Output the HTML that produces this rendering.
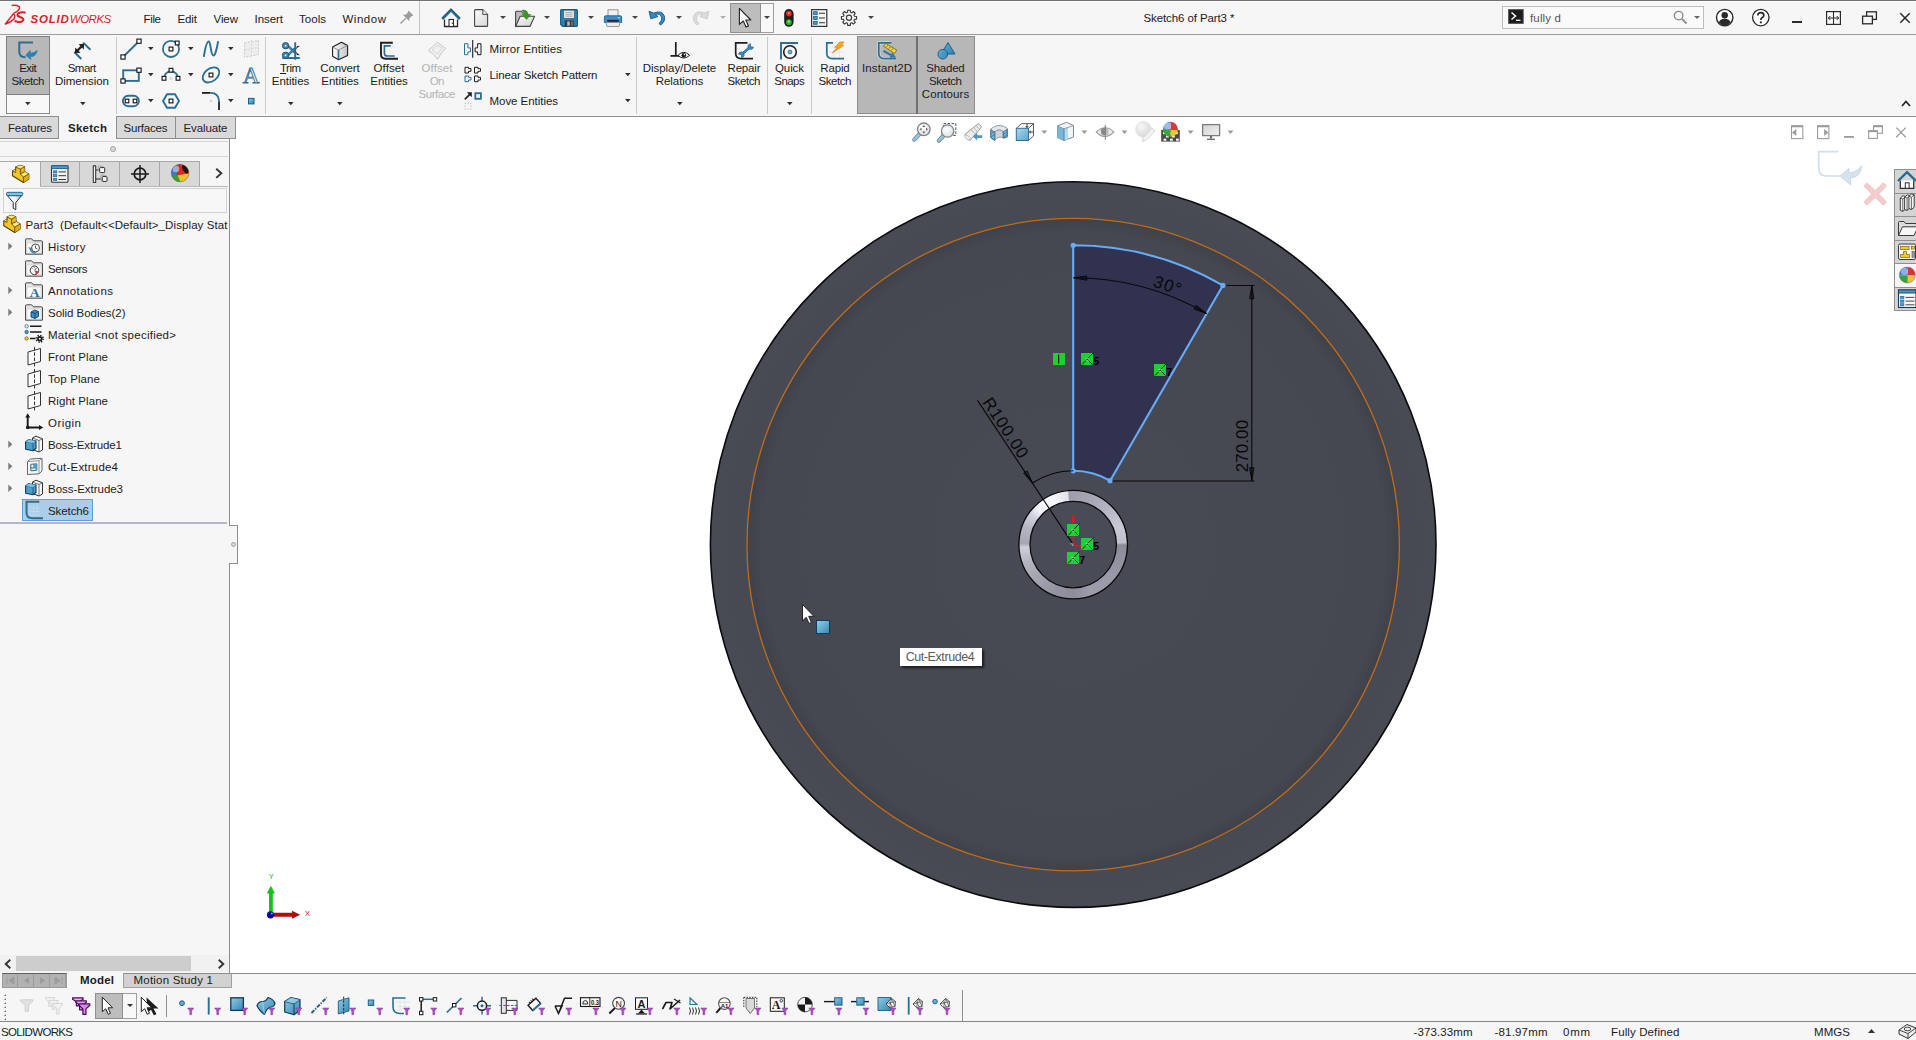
<!DOCTYPE html>
<html><head><meta charset="utf-8"><title>SOLIDWORKS</title>
<style>
html,body{margin:0;padding:0}
body{width:1916px;height:1040px;position:relative;overflow:hidden;background:#fff;font-family:"Liberation Sans",sans-serif;font-size:12px;color:#1b1b1b}
body>div,body>svg{position:absolute}
svg{overflow:visible}
</style></head><body>
<div style="left:0px;top:0px;width:1916px;height:117px;background:#f6f6f6;"></div>
<div style="left:0px;top:0px;width:1916px;height:1px;background:#707070;"></div>
<div style="left:0px;top:1px;width:1916px;height:1px;background:#fdfdfd;"></div>
<div style="left:0px;top:34px;width:1916px;height:1px;background:#9b9b9b;"></div>
<div style="left:0px;top:116px;width:1916px;height:1px;background:#8e8e8e;"></div>
<div style="left:0px;top:116px;width:230px;height:858px;background:#f6f6f6;"></div>
<div style="left:229px;top:139px;width:1px;height:835px;background:#8f8f8f;"></div>
<div style="left:0px;top:973px;width:1916px;height:67px;background:#f6f6f6;"></div>
<div style="left:123px;top:973px;width:1793px;height:1px;background:#8c8c8c;"></div>
<div style="left:0px;top:1021px;width:1916px;height:1px;background:#858585;"></div>
<div style="left:0px;top:116px;width:59px;height:23px;background:#d9d9d9;border:1px solid #8e8e8e;border-left:none;box-sizing:border-box;"></div>
<div style="left:116px;top:116px;width:60px;height:23px;background:#d9d9d9;border:1px solid #8e8e8e;box-sizing:border-box;"></div>
<div style="left:175px;top:116px;width:61px;height:23px;background:#d9d9d9;border:1px solid #8e8e8e;box-sizing:border-box;"></div>
<div style="left:59px;top:117px;width:57px;height:22px;background:#f6f6f6;"></div>
<div style="top:122px;line-height:12px;font-size:11.5px;color:#222;white-space:nowrap;letter-spacing:-0.200px;left:-170px;width:400px;text-align:center;text-indent:-0.200px;"><span id="t1">Features</span></div>
<div style="top:122px;line-height:12px;font-size:11.5px;color:#222;white-space:nowrap;font-weight:700;letter-spacing:0.255px;left:-112.5px;width:400px;text-align:center;text-indent:0.255px;"><span id="t2">Sketch</span></div>
<div style="top:122px;line-height:12px;font-size:11.5px;color:#222;white-space:nowrap;letter-spacing:-0.200px;left:-54.5px;width:400px;text-align:center;text-indent:-0.200px;"><span id="t3">Surfaces</span></div>
<div style="top:122px;line-height:12px;font-size:11.5px;color:#222;white-space:nowrap;letter-spacing:-0.109px;left:5.5px;width:400px;text-align:center;text-indent:-0.109px;"><span id="t4">Evaluate</span></div>
<div style="left:0px;top:141px;width:228px;height:1px;background:#d5d5d5;"></div>
<div style="left:0px;top:156px;width:228px;height:1px;background:#d5d5d5;"></div>
<div style="left:110px;top:146px;width:6px;height:6px;background:#d9d9d9;border-radius:50%;border:1px solid #a5a5a5;box-sizing:border-box;"></div>
<div style="left:40px;top:161px;width:40px;height:26px;background:#d8d8d8;border:1px solid #a8a8a8;box-sizing:border-box;"></div>
<div style="left:80px;top:161px;width:40px;height:26px;background:#d8d8d8;border:1px solid #a8a8a8;box-sizing:border-box;border-left:none;"></div>
<div style="left:120px;top:161px;width:40px;height:26px;background:#d8d8d8;border:1px solid #a8a8a8;box-sizing:border-box;border-left:none;"></div>
<div style="left:160px;top:161px;width:40px;height:26px;background:#d8d8d8;border:1px solid #a8a8a8;box-sizing:border-box;border-left:none;"></div>
<div style="left:0px;top:186px;width:228px;height:1px;background:#b8b8b8;"></div>
<div style="left:0px;top:161px;width:40px;height:26px;background:#f6f6f6;"></div>
<div style="left:0px;top:161px;width:41px;height:1px;background:#a8a8a8;"></div>
<div style="left:3px;top:188px;width:224px;height:25px;background:#f7f7f7;border:1px solid #d2d2d2;box-sizing:border-box;"></div>
<div style="left:229px;top:525px;width:9px;height:39px;background:#f6f6f6;border:1px solid #8f8f8f;border-left:none;box-sizing:border-box;"></div>
<div style="left:230.5px;top:541.5px;width:5px;height:5px;background:#d9d9d9;border-radius:50%;border:1px solid #a5a5a5;box-sizing:border-box;"></div>
<div style="left:0px;top:522px;width:227px;height:2px;background:#b6b6ca;"></div>
<svg style="left:0px;top:0px;" width="30" height="30" viewBox="0 0 30 30"><g fill="none" stroke="#d9232b" stroke-linecap="round" stroke-linejoin="round">
<path d="M12.300 5.400Q16.500 5 19.300 6.700Q20.300 9 16.800 11.600L14.600 12.700" stroke-width="1.500"/>
<path d="M5.400 24L13.500 13.600Q15.800 16.200 13.800 19.300Q11 22.300 5.400 24Z" stroke-width="1.500"/>
<path d="M24.800 12.500Q21 11.700 18.300 13.300Q16.200 15.300 19.300 16.700L22.300 18Q24.700 19.800 21.800 21.500Q19 22.600 15.300 21.300" stroke-width="2.100"/>
</g></svg>
<div style="top:12.5px;line-height:12px;font-size:11.5px;color:#d9232b;white-space:nowrap;font-weight:700;font-style:italic;letter-spacing:0.800px;left:30.5px;"><span id="t5">SOLID</span></div>
<div style="top:12.5px;line-height:12px;font-size:11.5px;color:#d9232b;white-space:nowrap;font-style:italic;letter-spacing:-0.490px;left:69.8px;"><span id="t6">WORKS</span></div>
<div style="top:13px;line-height:12px;font-size:11.5px;color:#1b1b1b;white-space:nowrap;letter-spacing:-0.344px;left:143.5px;"><span id="t7">File</span></div>
<div style="top:13px;line-height:12px;font-size:11.5px;color:#1b1b1b;white-space:nowrap;letter-spacing:-0.109px;left:177.5px;"><span id="t8">Edit</span></div>
<div style="top:13px;line-height:12px;font-size:11.5px;color:#1b1b1b;white-space:nowrap;letter-spacing:-0.077px;left:213.5px;"><span id="t9">View</span></div>
<div style="top:13px;line-height:12px;font-size:11.5px;color:#1b1b1b;white-space:nowrap;letter-spacing:-0.052px;left:254.5px;"><span id="t10">Insert</span></div>
<div style="top:13px;line-height:12px;font-size:11.5px;color:#1b1b1b;white-space:nowrap;letter-spacing:0.037px;left:299px;"><span id="t11">Tools</span></div>
<div style="top:13px;line-height:12px;font-size:11.5px;color:#1b1b1b;white-space:nowrap;letter-spacing:0.518px;left:342.5px;"><span id="t12">Window</span></div>
<div style="left:419px;top:1px;width:1px;height:33px;background:#c4c4c4;"></div>
<div style="top:12px;line-height:12px;font-size:11.5px;color:#1b1b1b;white-space:nowrap;letter-spacing:-0.100px;left:989px;width:400px;text-align:center;text-indent:-0.100px;"><span id="t13">Sketch6 of Part3 *</span></div>
<div style="left:1502px;top:6px;width:202px;height:23px;background:#fafafa;border:1px solid #bdbdbd;box-sizing:border-box;"></div>
<div style="top:11.5px;line-height:12px;font-size:11.5px;color:#555;white-space:nowrap;letter-spacing:0.159px;left:1530px;"><span id="t14">fully d</span></div>
<div style="left:730px;top:3px;width:31px;height:30px;background:#bdbdbd;border:1px solid #8f8f8f;box-sizing:border-box;"></div>
<div style="left:761px;top:3px;width:13px;height:30px;background:#f8f8f8;border:1px solid #9e9e9e;border-left:none;box-sizing:border-box;"></div>
<svg style="left:499.5px;top:16.0px;" width="6" height="3" viewBox="0 0 6 3"><path d="M0 0H6L3.0 3Z" fill="#444"/></svg>
<svg style="left:543.5px;top:16.0px;" width="6" height="3" viewBox="0 0 6 3"><path d="M0 0H6L3.0 3Z" fill="#444"/></svg>
<svg style="left:587.5px;top:16.0px;" width="6" height="3" viewBox="0 0 6 3"><path d="M0 0H6L3.0 3Z" fill="#444"/></svg>
<svg style="left:631.5px;top:16.0px;" width="6" height="3" viewBox="0 0 6 3"><path d="M0 0H6L3.0 3Z" fill="#444"/></svg>
<svg style="left:675.5px;top:16.0px;" width="6" height="3" viewBox="0 0 6 3"><path d="M0 0H6L3.0 3Z" fill="#444"/></svg>
<svg style="left:719.5px;top:16.0px;" width="6" height="3" viewBox="0 0 6 3"><path d="M0 0H6L3.0 3Z" fill="#b0b0b0"/></svg>
<svg style="left:763.5px;top:16.0px;" width="6" height="3" viewBox="0 0 6 3"><path d="M0 0H6L3.0 3Z" fill="#444"/></svg>
<svg style="left:867.5px;top:16.0px;" width="6" height="3" viewBox="0 0 6 3"><path d="M0 0H6L3.0 3Z" fill="#444"/></svg>
<svg style="left:1694.0px;top:16.0px;" width="6" height="3" viewBox="0 0 6 3"><path d="M0 0H6L3.0 3Z" fill="#666"/></svg>
<div style="left:6px;top:36px;width:44px;height:78px;background:#f8f8f8;border:1px solid #8a8a8a;box-sizing:border-box;"></div>
<div style="left:6px;top:36px;width:44px;height:59px;background:#b8b8b8;border:1px solid #7e7e7e;box-sizing:border-box;"></div>
<div style="top:61.5px;line-height:12px;font-size:11.5px;color:#1b1b1b;white-space:nowrap;letter-spacing:-0.559px;left:-172px;width:400px;text-align:center;text-indent:-0.559px;"><span id="t15">Exit</span></div>
<div style="top:74.5px;line-height:12px;font-size:11.5px;color:#1b1b1b;white-space:nowrap;letter-spacing:-0.432px;left:-172px;width:400px;text-align:center;text-indent:-0.432px;"><span id="t16">Sketch</span></div>
<svg style="left:24.7px;top:101.9px;" width="5.6" height="3.2" viewBox="0 0 5.6 3.2"><path d="M0 0H5.6L2.8 3.2Z" fill="#2e2e2e"/></svg>
<div style="top:61.5px;line-height:12px;font-size:11.5px;color:#1b1b1b;white-space:nowrap;letter-spacing:-0.546px;left:-118px;width:400px;text-align:center;text-indent:-0.546px;"><span id="t17">Smart</span></div>
<div style="top:74.5px;line-height:12px;font-size:11.5px;color:#1b1b1b;white-space:nowrap;letter-spacing:-0.041px;left:-118px;width:400px;text-align:center;text-indent:-0.041px;"><span id="t18">Dimension</span></div>
<svg style="left:79.7px;top:101.9px;" width="5.6" height="3.2" viewBox="0 0 5.6 3.2"><path d="M0 0H5.6L2.8 3.2Z" fill="#2e2e2e"/></svg>
<div style="left:116px;top:37px;width:1px;height:77px;background:#c9c9c9;"></div>
<div style="left:265px;top:37px;width:1px;height:77px;background:#c9c9c9;"></div>
<div style="left:636px;top:37px;width:1px;height:77px;background:#c9c9c9;"></div>
<div style="left:767px;top:37px;width:1px;height:77px;background:#c9c9c9;"></div>
<div style="left:811px;top:37px;width:1px;height:77px;background:#c9c9c9;"></div>
<svg style="left:147.7px;top:46.9px;" width="5.6" height="3.2" viewBox="0 0 5.6 3.2"><path d="M0 0H5.6L2.8 3.2Z" fill="#2e2e2e"/></svg>
<svg style="left:147.7px;top:72.9px;" width="5.6" height="3.2" viewBox="0 0 5.6 3.2"><path d="M0 0H5.6L2.8 3.2Z" fill="#2e2e2e"/></svg>
<svg style="left:147.7px;top:98.9px;" width="5.6" height="3.2" viewBox="0 0 5.6 3.2"><path d="M0 0H5.6L2.8 3.2Z" fill="#2e2e2e"/></svg>
<svg style="left:187.7px;top:46.9px;" width="5.6" height="3.2" viewBox="0 0 5.6 3.2"><path d="M0 0H5.6L2.8 3.2Z" fill="#2e2e2e"/></svg>
<svg style="left:187.7px;top:72.9px;" width="5.6" height="3.2" viewBox="0 0 5.6 3.2"><path d="M0 0H5.6L2.8 3.2Z" fill="#2e2e2e"/></svg>
<svg style="left:227.7px;top:46.9px;" width="5.6" height="3.2" viewBox="0 0 5.6 3.2"><path d="M0 0H5.6L2.8 3.2Z" fill="#2e2e2e"/></svg>
<svg style="left:227.7px;top:72.9px;" width="5.6" height="3.2" viewBox="0 0 5.6 3.2"><path d="M0 0H5.6L2.8 3.2Z" fill="#2e2e2e"/></svg>
<svg style="left:227.7px;top:98.9px;" width="5.6" height="3.2" viewBox="0 0 5.6 3.2"><path d="M0 0H5.6L2.8 3.2Z" fill="#2e2e2e"/></svg>
<div style="top:61.5px;line-height:12px;font-size:11.5px;color:#1b1b1b;white-space:nowrap;letter-spacing:-0.527px;left:90.5px;width:400px;text-align:center;text-indent:-0.527px;"><span id="t19"><u>T</u>rim</span></div>
<div style="top:74.5px;line-height:12px;font-size:11.5px;color:#1b1b1b;white-space:nowrap;letter-spacing:-0.031px;left:90.5px;width:400px;text-align:center;text-indent:-0.031px;"><span id="t20">Entities</span></div>
<svg style="left:287.7px;top:101.9px;" width="5.6" height="3.2" viewBox="0 0 5.6 3.2"><path d="M0 0H5.6L2.8 3.2Z" fill="#2e2e2e"/></svg>
<div style="top:61.5px;line-height:12px;font-size:11.5px;color:#1b1b1b;white-space:nowrap;letter-spacing:-0.129px;left:140px;width:400px;text-align:center;text-indent:-0.129px;"><span id="t21">Convert</span></div>
<div style="top:74.5px;line-height:12px;font-size:11.5px;color:#1b1b1b;white-space:nowrap;letter-spacing:-0.031px;left:140px;width:400px;text-align:center;text-indent:-0.031px;"><span id="t22">Entities</span></div>
<svg style="left:337.2px;top:101.9px;" width="5.6" height="3.2" viewBox="0 0 5.6 3.2"><path d="M0 0H5.6L2.8 3.2Z" fill="#2e2e2e"/></svg>
<div style="top:61.5px;line-height:12px;font-size:11.5px;color:#1b1b1b;white-space:nowrap;letter-spacing:0.104px;left:189px;width:400px;text-align:center;text-indent:0.104px;"><span id="t23">Offset</span></div>
<div style="top:74.5px;line-height:12px;font-size:11.5px;color:#1b1b1b;white-space:nowrap;letter-spacing:-0.031px;left:189px;width:400px;text-align:center;text-indent:-0.031px;"><span id="t24">Entities</span></div>
<div style="top:61.5px;line-height:12px;font-size:11.5px;color:#b4b4b4;white-space:nowrap;letter-spacing:0.104px;left:237px;width:400px;text-align:center;text-indent:0.104px;"><span id="t25">Offset</span></div>
<div style="top:74.5px;line-height:12px;font-size:11.5px;color:#b4b4b4;white-space:nowrap;letter-spacing:-0.750px;left:237px;width:400px;text-align:center;text-indent:-0.750px;"><span id="t26">On</span></div>
<div style="top:87.5px;line-height:12px;font-size:11.5px;color:#b4b4b4;white-space:nowrap;letter-spacing:-0.440px;left:237px;width:400px;text-align:center;text-indent:-0.440px;"><span id="t27">Surface</span></div>
<div style="top:43px;line-height:12px;font-size:11.5px;color:#1b1b1b;white-space:nowrap;letter-spacing:0.112px;left:489.5px;"><span id="t28">Mirror Entities</span></div>
<div style="top:69px;line-height:12px;font-size:11.5px;color:#1b1b1b;white-space:nowrap;letter-spacing:-0.130px;left:489.5px;"><span id="t29">Linear Sketch Pattern</span></div>
<div style="top:95px;line-height:12px;font-size:11.5px;color:#1b1b1b;white-space:nowrap;letter-spacing:-0.045px;left:489.5px;"><span id="t30">Move Entities</span></div>
<svg style="left:624.7px;top:72.9px;" width="5.6" height="3.2" viewBox="0 0 5.6 3.2"><path d="M0 0H5.6L2.8 3.2Z" fill="#2e2e2e"/></svg>
<svg style="left:624.7px;top:98.9px;" width="5.6" height="3.2" viewBox="0 0 5.6 3.2"><path d="M0 0H5.6L2.8 3.2Z" fill="#2e2e2e"/></svg>
<div style="top:61.5px;line-height:12px;font-size:11.5px;color:#1b1b1b;white-space:nowrap;letter-spacing:-0.050px;left:479.5px;width:400px;text-align:center;text-indent:-0.050px;"><span id="t31">Display/Delete</span></div>
<div style="top:74.5px;line-height:12px;font-size:11.5px;color:#1b1b1b;white-space:nowrap;letter-spacing:-0.057px;left:479.5px;width:400px;text-align:center;text-indent:-0.057px;"><span id="t32">Relations</span></div>
<svg style="left:676.7px;top:101.9px;" width="5.6" height="3.2" viewBox="0 0 5.6 3.2"><path d="M0 0H5.6L2.8 3.2Z" fill="#2e2e2e"/></svg>
<div style="top:61.5px;line-height:12px;font-size:11.5px;color:#1b1b1b;white-space:nowrap;letter-spacing:-0.177px;left:544px;width:400px;text-align:center;text-indent:-0.177px;"><span id="t33">Repair</span></div>
<div style="top:74.5px;line-height:12px;font-size:11.5px;color:#1b1b1b;white-space:nowrap;letter-spacing:-0.432px;left:544px;width:400px;text-align:center;text-indent:-0.432px;"><span id="t34">Sketch</span></div>
<div style="top:61.5px;line-height:12px;font-size:11.5px;color:#1b1b1b;white-space:nowrap;letter-spacing:-0.102px;left:589.5px;width:400px;text-align:center;text-indent:-0.102px;"><span id="t35">Quick</span></div>
<div style="top:74.5px;line-height:12px;font-size:11.5px;color:#1b1b1b;white-space:nowrap;letter-spacing:-0.530px;left:589.5px;width:400px;text-align:center;text-indent:-0.530px;"><span id="t36">Snaps</span></div>
<svg style="left:786.7px;top:101.9px;" width="5.6" height="3.2" viewBox="0 0 5.6 3.2"><path d="M0 0H5.6L2.8 3.2Z" fill="#2e2e2e"/></svg>
<div style="top:61.5px;line-height:12px;font-size:11.5px;color:#1b1b1b;white-space:nowrap;letter-spacing:-0.140px;left:635px;width:400px;text-align:center;text-indent:-0.140px;"><span id="t37">Rapid</span></div>
<div style="top:74.5px;line-height:12px;font-size:11.5px;color:#1b1b1b;white-space:nowrap;letter-spacing:-0.432px;left:635px;width:400px;text-align:center;text-indent:-0.432px;"><span id="t38">Sketch</span></div>
<div style="left:857px;top:36px;width:60px;height:78px;background:#b7b7b7;border:1px solid #8d8d8d;box-sizing:border-box;"></div>
<div style="left:916px;top:36px;width:59px;height:78px;background:#b7b7b7;border:1px solid #8d8d8d;box-sizing:border-box;"></div>
<div style="left:916px;top:36px;width:2px;height:78px;background:#707070;"></div>
<div style="top:61.5px;line-height:12px;font-size:11.5px;color:#1b1b1b;white-space:nowrap;letter-spacing:0.096px;left:687px;width:400px;text-align:center;text-indent:0.096px;"><span id="t39">Instant2D</span></div>
<div style="top:61.5px;line-height:12px;font-size:11.5px;color:#1b1b1b;white-space:nowrap;letter-spacing:-0.232px;left:745.5px;width:400px;text-align:center;text-indent:-0.232px;"><span id="t40">Shaded</span></div>
<div style="top:74.5px;line-height:12px;font-size:11.5px;color:#1b1b1b;white-space:nowrap;letter-spacing:-0.432px;left:745.5px;width:400px;text-align:center;text-indent:-0.432px;"><span id="t41">Sketch</span></div>
<div style="top:87.5px;line-height:12px;font-size:11.5px;color:#1b1b1b;white-space:nowrap;letter-spacing:0.118px;left:745.5px;width:400px;text-align:center;text-indent:0.118px;"><span id="t42">Contours</span></div>
<svg style="left:1900.5px;top:99.5px;" width="10" height="7" viewBox="0 0 10 7"><path d="M1 6L5 1.500L9 6" fill="none" stroke="#222" stroke-width="1.700"/></svg>
<div style="top:219px;line-height:12px;font-size:11.5px;color:#1b1b1b;white-space:nowrap;letter-spacing:0.095px;left:25.5px;"><span id="t43">Part3&nbsp; (Default&lt;&lt;Default&gt;_Display Stat</span></div>
<div style="top:241.0px;line-height:12px;font-size:11.5px;color:#1b1b1b;white-space:nowrap;letter-spacing:0.284px;left:48px;"><span id="t44">History</span></div>
<svg style="left:7.5px;top:242.0px;" width="5" height="9" viewBox="0 0 5 9"><path d="M0.300 0.500L4.300 4.300L0.300 8.100Z" fill="#7a7a7a"/></svg>
<div style="top:263.0px;line-height:12px;font-size:11.5px;color:#1b1b1b;white-space:nowrap;letter-spacing:-0.449px;left:48px;"><span id="t45">Sensors</span></div>
<div style="top:285.0px;line-height:12px;font-size:11.5px;color:#1b1b1b;white-space:nowrap;letter-spacing:0.425px;left:48px;"><span id="t46">Annotations</span></div>
<svg style="left:7.5px;top:286.0px;" width="5" height="9" viewBox="0 0 5 9"><path d="M0.300 0.500L4.300 4.300L0.300 8.100Z" fill="#7a7a7a"/></svg>
<div style="top:307.0px;line-height:12px;font-size:11.5px;color:#1b1b1b;white-space:nowrap;letter-spacing:-0.035px;left:48px;"><span id="t47">Solid Bodies(2)</span></div>
<svg style="left:7.5px;top:308.0px;" width="5" height="9" viewBox="0 0 5 9"><path d="M0.300 0.500L4.300 4.300L0.300 8.100Z" fill="#7a7a7a"/></svg>
<div style="top:329.0px;line-height:12px;font-size:11.5px;color:#1b1b1b;white-space:nowrap;letter-spacing:0.256px;left:48px;"><span id="t48">Material &lt;not specified&gt;</span></div>
<div style="top:351.0px;line-height:12px;font-size:11.5px;color:#1b1b1b;white-space:nowrap;letter-spacing:0.055px;left:48px;"><span id="t49">Front Plane</span></div>
<div style="top:373.0px;line-height:12px;font-size:11.5px;color:#1b1b1b;white-space:nowrap;letter-spacing:0.105px;left:48px;"><span id="t50">Top Plane</span></div>
<div style="top:395.0px;line-height:12px;font-size:11.5px;color:#1b1b1b;white-space:nowrap;letter-spacing:0.053px;left:48px;"><span id="t51">Right Plane</span></div>
<div style="top:417.0px;line-height:12px;font-size:11.5px;color:#1b1b1b;white-space:nowrap;letter-spacing:0.464px;left:48px;"><span id="t52">Origin</span></div>
<div style="top:439.0px;line-height:12px;font-size:11.5px;color:#1b1b1b;white-space:nowrap;letter-spacing:-0.120px;left:48px;"><span id="t53">Boss-Extrude1</span></div>
<svg style="left:7.5px;top:440.0px;" width="5" height="9" viewBox="0 0 5 9"><path d="M0.300 0.500L4.300 4.300L0.300 8.100Z" fill="#7a7a7a"/></svg>
<div style="top:461.0px;line-height:12px;font-size:11.5px;color:#1b1b1b;white-space:nowrap;letter-spacing:0.203px;left:48px;"><span id="t54">Cut-Extrude4</span></div>
<svg style="left:7.5px;top:462.0px;" width="5" height="9" viewBox="0 0 5 9"><path d="M0.300 0.500L4.300 4.300L0.300 8.100Z" fill="#7a7a7a"/></svg>
<div style="top:483.0px;line-height:12px;font-size:11.5px;color:#1b1b1b;white-space:nowrap;letter-spacing:-0.036px;left:48px;"><span id="t55">Boss-Extrude3</span></div>
<svg style="left:7.5px;top:484.0px;" width="5" height="9" viewBox="0 0 5 9"><path d="M0.300 0.500L4.300 4.300L0.300 8.100Z" fill="#7a7a7a"/></svg>
<div style="left:22px;top:499.0px;width:71px;height:22px;background:#aacdea;border:1px solid #5f9fd8;box-sizing:border-box;"></div>
<div style="top:505.0px;line-height:12px;font-size:11.5px;color:#1b1b1b;white-space:nowrap;letter-spacing:-0.094px;left:48px;"><span id="t56">Sketch6</span></div>
<div style="left:0px;top:955px;width:229px;height:17px;background:#f1f1f1;"></div>
<div style="left:16px;top:956px;width:175px;height:15px;background:#cdcdcd;"></div>
<svg style="left:4px;top:958.5px;" width="8" height="10" viewBox="0 0 8 10"><path d="M6.300 0.800L1.700 5L6.300 9.200" fill="none" stroke="#333" stroke-width="1.900"/></svg>
<svg style="left:217px;top:958.5px;" width="8" height="10" viewBox="0 0 8 10"><path d="M1.700 0.800L6.300 5L1.700 9.200" fill="none" stroke="#333" stroke-width="1.900"/></svg>
<svg style="left:214px;top:167px;" width="10" height="14" viewBox="0 0 10 14"><path d="M2.200 1.700L7.300 6.300L2.200 10.900" fill="none" stroke="#333" stroke-width="1.900"/></svg>
<div style="left:2px;top:973px;width:65px;height:15px;background:#b2b2b2;border:1px solid #9a9a9a;border-top:1px solid #5e5e5e;box-sizing:border-box;"></div>
<div style="left:3px;top:974px;width:15px;height:13px;background:#b2b2b2;border-right:1px solid #9c9c9c;box-sizing:border-box;"></div>
<div style="left:19px;top:974px;width:15px;height:13px;background:#b2b2b2;border-right:1px solid #9c9c9c;box-sizing:border-box;"></div>
<div style="left:35px;top:974px;width:15px;height:13px;background:#b2b2b2;border-right:1px solid #9c9c9c;box-sizing:border-box;"></div>
<div style="left:51px;top:974px;width:15px;height:13px;background:#b2b2b2;border-right:1px solid #9c9c9c;box-sizing:border-box;"></div>
<svg style="left:3px;top:974px;" width="15" height="13" viewBox="0 0 15 13"><path d="M4 3v7M11 3L6 6.500L11 10Z" fill="#9c9c9c" stroke="#9c9c9c" stroke-width="1"/></svg>
<svg style="left:19px;top:974px;" width="15" height="13" viewBox="0 0 15 13"><path d="M10 3L5 6.500L10 10Z" fill="#9c9c9c"/></svg>
<svg style="left:35px;top:974px;" width="15" height="13" viewBox="0 0 15 13"><path d="M5 3L10 6.500L5 10Z" fill="#9c9c9c"/></svg>
<svg style="left:51px;top:974px;" width="15" height="13" viewBox="0 0 15 13"><path d="M11 3v7M4 3L9 6.500L4 10Z" fill="#9c9c9c" stroke="#9c9c9c" stroke-width="1"/></svg>
<div style="top:973.5px;line-height:12px;font-size:11.5px;color:#1b1b1b;white-space:nowrap;font-weight:700;letter-spacing:0.193px;left:-103px;width:400px;text-align:center;text-indent:0.193px;"><span id="t57">Model</span></div>
<div style="left:123px;top:973px;width:109px;height:15px;background:#d2d2d2;border:1px solid #a0a0a0;border-top:1px solid #8c8c8c;box-sizing:border-box;"></div>
<div style="top:973.5px;line-height:12px;font-size:11.5px;color:#1b1b1b;white-space:nowrap;letter-spacing:0.214px;left:133.5px;"><span id="t58">Motion Study 1</span></div>
<div style="left:4px;top:994px;width:1px;height:1px;background:#ffffff;"></div>
<div style="left:5px;top:995px;width:1px;height:1px;background:#6a6a6a;"></div>
<div style="left:4px;top:995px;width:1px;height:1px;background:#b5b5b5;"></div>
<div style="left:5px;top:994px;width:1px;height:1px;background:#b5b5b5;"></div>
<div style="left:4px;top:998px;width:1px;height:1px;background:#ffffff;"></div>
<div style="left:5px;top:999px;width:1px;height:1px;background:#6a6a6a;"></div>
<div style="left:4px;top:999px;width:1px;height:1px;background:#b5b5b5;"></div>
<div style="left:5px;top:998px;width:1px;height:1px;background:#b5b5b5;"></div>
<div style="left:4px;top:1002px;width:1px;height:1px;background:#ffffff;"></div>
<div style="left:5px;top:1003px;width:1px;height:1px;background:#6a6a6a;"></div>
<div style="left:4px;top:1003px;width:1px;height:1px;background:#b5b5b5;"></div>
<div style="left:5px;top:1002px;width:1px;height:1px;background:#b5b5b5;"></div>
<div style="left:4px;top:1006px;width:1px;height:1px;background:#ffffff;"></div>
<div style="left:5px;top:1007px;width:1px;height:1px;background:#6a6a6a;"></div>
<div style="left:4px;top:1007px;width:1px;height:1px;background:#b5b5b5;"></div>
<div style="left:5px;top:1006px;width:1px;height:1px;background:#b5b5b5;"></div>
<div style="left:4px;top:1010px;width:1px;height:1px;background:#ffffff;"></div>
<div style="left:5px;top:1011px;width:1px;height:1px;background:#6a6a6a;"></div>
<div style="left:4px;top:1011px;width:1px;height:1px;background:#b5b5b5;"></div>
<div style="left:5px;top:1010px;width:1px;height:1px;background:#b5b5b5;"></div>
<div style="left:4px;top:1014px;width:1px;height:1px;background:#ffffff;"></div>
<div style="left:5px;top:1015px;width:1px;height:1px;background:#6a6a6a;"></div>
<div style="left:4px;top:1015px;width:1px;height:1px;background:#b5b5b5;"></div>
<div style="left:5px;top:1014px;width:1px;height:1px;background:#b5b5b5;"></div>
<div style="left:4px;top:1018px;width:1px;height:1px;background:#ffffff;"></div>
<div style="left:5px;top:1019px;width:1px;height:1px;background:#6a6a6a;"></div>
<div style="left:4px;top:1019px;width:1px;height:1px;background:#b5b5b5;"></div>
<div style="left:5px;top:1018px;width:1px;height:1px;background:#b5b5b5;"></div>
<div style="left:95px;top:993px;width:28px;height:26px;background:#bdbdbd;border:1px solid #8f8f8f;box-sizing:border-box;"></div>
<div style="left:123px;top:993px;width:14px;height:26px;background:#f8f8f8;border:1px solid #9e9e9e;border-left:none;box-sizing:border-box;"></div>
<svg style="left:126.5px;top:1004px;" width="6" height="3" viewBox="0 0 6 3"><path d="M0 0H6L3 3Z" fill="#333"/></svg>
<div style="left:166px;top:995px;width:1px;height:22px;background:#8f8f8f;"></div>
<div style="left:962px;top:990px;width:1px;height:31px;background:#8f8f8f;"></div>
<div style="top:1025.5px;line-height:12px;font-size:11.5px;color:#1b1b1b;white-space:nowrap;letter-spacing:-0.663px;left:1px;"><span id="t59">SOLIDWORKS</span></div>
<div style="top:1025.5px;line-height:12px;font-size:11.5px;color:#1b1b1b;white-space:nowrap;letter-spacing:0.104px;left:1413.5px;"><span id="t60">-373.33mm</span></div>
<div style="top:1025.5px;line-height:12px;font-size:11.5px;color:#1b1b1b;white-space:nowrap;letter-spacing:0.174px;left:1494.5px;"><span id="t61">-81.97mm</span></div>
<div style="top:1025.5px;line-height:12px;font-size:11.5px;color:#1b1b1b;white-space:nowrap;letter-spacing:0.800px;left:1563px;"><span id="t62">0mm</span></div>
<div style="top:1025.5px;line-height:12px;font-size:11.5px;color:#1b1b1b;white-space:nowrap;letter-spacing:0.115px;left:1611px;"><span id="t63">Fully Defined</span></div>
<div style="top:1025.5px;line-height:12px;font-size:11.5px;color:#1b1b1b;white-space:nowrap;letter-spacing:0.074px;left:1814px;"><span id="t64">MMGS</span></div>
<svg style="left:1868px;top:1029px;" width="7" height="4" viewBox="0 0 7 4"><path d="M0 4H7L3.500 0Z" fill="#333"/></svg>
<svg style="left:230px;top:117px;font-family:'Liberation Sans',sans-serif" width="1686" height="854" viewBox="230 117 1686 854"><defs>
<radialGradient id="gd" cx="1073.2" cy="544.6" r="363" gradientUnits="userSpaceOnUse">
<stop offset="0" stop-color="#484a55"/><stop offset="0.5" stop-color="#464852"/><stop offset="0.860" stop-color="#454751"/>
<stop offset="0.885" stop-color="#41434d"/><stop offset="0.897" stop-color="#3f414b"/><stop offset="0.899" stop-color="#474953"/><stop offset="1" stop-color="#484a54"/>
</radialGradient>
<linearGradient id="gr" x1="0" y1="0" x2="1" y2="1">
<stop offset="0" stop-color="#ffffff"/><stop offset="0.280" stop-color="#e9e9f2"/><stop offset="0.420" stop-color="#9c9daa"/><stop offset="0.600" stop-color="#b6b7c4"/><stop offset="1" stop-color="#7d7e8a"/>
</linearGradient>
</defs>
<circle cx="1073.2" cy="544.6" r="362.800" fill="url(#gd)" stroke="#0b0b0d" stroke-width="1.600"/>
<circle cx="1073.2" cy="544.6" r="326.200" fill="none" stroke="#c06c1a" stroke-width="1.300"/></svg>
<div style="left:1018.9px;top:490.3px;width:108.6px;height:108.6px;border-radius:50%;background:conic-gradient(from -45deg,#f2f2fa 0deg,#f7f7fd 20deg,#e2e2ec 39deg,#9d9eab 40.5deg,#a5a6b4 65deg,#b6b7c4 90deg,#c8c9d5 115deg,#c0c1cd 133deg,#8a8b97 135.5deg,#8f909d 145deg,#9a9ba8 180deg,#9c9daa 205deg,#8d8e9b 225deg,#9293a0 245deg,#a2a3af 270deg,#b4b5c1 295deg,#cfcfd9 312deg,#a6a7b4 316deg,#b5b6c2 335deg,#cfd0da 350deg,#f2f2fa 360deg);"></div>
<svg style="left:230px;top:117px;font-family:'Liberation Sans',sans-serif" width="1686" height="854" viewBox="230 117 1686 854"><circle cx="1073.2" cy="544.6" r="54.300" fill="none" stroke="#0b0b0d" stroke-width="1.300"/>
<circle cx="1073.2" cy="544.6" r="43.200" fill="#494b56" stroke="#0b0b0d" stroke-width="1.300"/>
<path d="M1073.20 245.30A299.3 299.3 0 0 1 1222.85 285.40L1110.10 480.69A73.8 73.8 0 0 0 1073.20 470.80Z" fill="#30324f" stroke="#66acf8" stroke-width="2.100" stroke-linejoin="round"/>
<circle cx="1073.20" cy="245.30" r="2.600" fill="#66acf8"/>
<circle cx="1222.85" cy="285.40" r="2.600" fill="#66acf8"/>
<circle cx="1110.10" cy="480.69" r="2.600" fill="#66acf8"/>
<circle cx="1073.20" cy="470.80" r="2.600" fill="#66acf8"/>
<path d="M1073.20 277.80A266.8 266.8 0 0 1 1206.60 313.54" fill="none" stroke="#08080a" stroke-width="1.100"/>
<path d="M1073.7 277.8L1086.7 276.0L1086.7 280.2Z" fill="#000" fill-opacity="0.350" stroke="#050507" stroke-width="0.900" stroke-linejoin="round"/>
<path d="M1206.6 313.5L1194.2 309.1L1196.2 305.5Z" fill="#000" fill-opacity="0.350" stroke="#050507" stroke-width="0.900" stroke-linejoin="round"/>
<text x="1165.6" y="290.7" transform="rotate(19 1165.6 290.7)" font-size="17" text-anchor="middle" fill="#08080a" textLength="28" lengthAdjust="spacing">30°</text>
<path d="M1226.500 285.500H1254.500M1112.500 481H1254.500M1251.800 285.500V481" fill="none" stroke="#08080a" stroke-width="1.100"/>
<path d="M1251.8 285.8L1253.9 298.8L1249.7 298.8Z" fill="#000" fill-opacity="0.350" stroke="#050507" stroke-width="0.900" stroke-linejoin="round"/>
<path d="M1251.8 480.7L1249.7 467.7L1253.9 467.7Z" fill="#000" fill-opacity="0.350" stroke="#050507" stroke-width="0.900" stroke-linejoin="round"/>
<text x="0" y="0" transform="translate(1248.200 472.300) rotate(-90)" font-size="16.800" fill="#08080a" textLength="52.300" lengthAdjust="spacing">270.00</text>
<path d="M977.5 400.4L1073.2 544.6" fill="none" stroke="#08080a" stroke-width="1.100"/>
<path d="M1032.5 483.0L1023.6 473.3L1027.1 471.0Z" fill="#000" fill-opacity="0.350" stroke="#050507" stroke-width="0.900" stroke-linejoin="round"/>
<path d="M1032.47 483.06A73.8 73.8 0 0 1 1073.20 470.80" fill="none" stroke="#08080a" stroke-width="1.100"/>
<text x="0" y="0" transform="translate(981.9 402.3) rotate(56.55)" font-size="16.800" fill="#08080a" textLength="68.500" lengthAdjust="spacing">R100.00</text></svg>
<svg style="left:230px;top:117px;font-family:'Liberation Sans',sans-serif" width="1686" height="854" viewBox="230 117 1686 854"><rect x="1053" y="353" width="12" height="12" fill="#22cd35"/><path d="M1058.600 354.500V363.500" stroke="#0a1a0a" stroke-width="1.200"/>
<rect x="1081" y="353" width="12" height="12" fill="#22cd35"/><path d="M1093.5 352.5L1082 364.5M1087 359L1092.5 364.5" stroke="#0a1a0a" stroke-width="0.900" fill="none"/><path d="M1085.7 358.4h0.900M1087.6 358.4h0.900M1085.7 360.3h0.900M1087.6 360.3h0.900" stroke="#e8ffe8" stroke-width="0.900"/><text x="1093.3" y="364.8" font-size="10.500" font-weight="700" fill="#050505">5</text>
<rect x="1154" y="364" width="12" height="12" fill="#22cd35"/><path d="M1166.5 363.5L1155 375.5M1160 370L1165.5 375.5" stroke="#0a1a0a" stroke-width="0.900" fill="none"/><path d="M1158.7 369.4h0.900M1160.6 369.4h0.900M1158.7 371.3h0.900M1160.6 371.3h0.900" stroke="#e8ffe8" stroke-width="0.900"/><text x="1166.3" y="375.8" font-size="10.500" font-weight="700" fill="#050505">7</text>
<path d="M1073.300 512L1075.300 521.500H1071.300Z" fill="#e8141c"/>
<path d="M1073.300 521V524" stroke="#e8141c" stroke-width="1.400"/>
<path d="M1073.500 536V541.500Q1073.800 545.800 1078 546H1082" fill="none" stroke="#e8141c" stroke-width="1.500"/>
<path d="M1070.500 543.800H1072.800V546" fill="none" stroke="#a8c4ee" stroke-width="0.900"/>
<rect x="1067" y="524" width="12" height="12" fill="#22cd35"/><path d="M1079.5 523.5L1068 535.5M1073 530L1078.5 535.5" stroke="#0a1a0a" stroke-width="0.900" fill="none"/><path d="M1071.7 529.4h0.900M1073.6 529.4h0.900M1071.7 531.3h0.900M1073.6 531.3h0.900" stroke="#e8ffe8" stroke-width="0.900"/>
<rect x="1081" y="538" width="12" height="12" fill="#22cd35"/><path d="M1093.5 537.5L1082 549.5M1087 544L1092.5 549.5" stroke="#0a1a0a" stroke-width="0.900" fill="none"/><path d="M1085.7 543.4h0.900M1087.6 543.4h0.900M1085.7 545.3h0.900M1087.6 545.3h0.900" stroke="#e8ffe8" stroke-width="0.900"/><text x="1093.3" y="549.8" font-size="10.500" font-weight="700" fill="#050505">5</text>
<rect x="1067" y="552" width="12" height="12" fill="#22cd35"/><path d="M1079.5 551.5L1068 563.5M1073 558L1078.5 563.5" stroke="#0a1a0a" stroke-width="0.900" fill="none"/><path d="M1071.7 557.4h0.900M1073.6 557.4h0.900M1071.7 559.3h0.900M1073.6 559.3h0.900" stroke="#e8ffe8" stroke-width="0.900"/><text x="1079.3" y="563.8" font-size="10.500" font-weight="700" fill="#050505">7</text>
<path d="M802.500 604.500V620.800L806.300 617.300L809 623.500L811.400 622.400L808.700 616.300H813.800Z" fill="#fff" stroke="#1a1a1a" stroke-width="0.900" stroke-linejoin="round"/>
<defs><linearGradient id="gsq" x1="0" y1="0" x2="1" y2="1"><stop offset="0" stop-color="#8fd3ee"/><stop offset="1" stop-color="#3b86ae"/></linearGradient></defs>
<rect x="816.500" y="620.500" width="13" height="13" fill="url(#gsq)" stroke="#0e3c5c" stroke-width="1"/>
<path d="M269 914V893.500H266.800L270.900 885.800L275 893.500H272.800V914Z" fill="#14c414"/>
<path d="M271 912.800H292V910.800L300.200 914.800L292 918.800V916.800H271Z" fill="#b30c0c"/>
<circle cx="270.500" cy="914.800" r="3.600" fill="#0a0aa0"/><circle cx="271.800" cy="913.500" r="1.100" fill="#8a8af0"/>
<text x="268.700" y="878.500" font-size="7.500" fill="#14b414">Y</text>
<text x="305" y="915.500" font-size="7.500" fill="#d01030">X</text></svg>
<div style="left:900px;top:648px;width:81.5px;height:18px;background:#fff;box-shadow:2px 2px 2px rgba(0,0,0,0.600);"></div>
<div style="top:650px;line-height:14px;font-size:12.5px;color:#5a5a62;white-space:nowrap;letter-spacing:-0.423px;left:905.7px;"><span id="t65">Cut-Extrude4</span></div>
<svg style="left:441px;top:8px;" width="20" height="20" viewBox="0 0 20 20"><path d="M3.500 11.500V18.500H16.500V11.500" fill="#fff" stroke="#2b2b2b" stroke-width="1.300"/>
<path d="M1.200 11L10 2.200L18.800 11" fill="none" stroke="#256a93" stroke-width="2.600" stroke-linejoin="miter"/>
<path d="M1.200 11L10 2.200L18.800 11" fill="none" stroke="#123c58" stroke-width="0.600" transform="translate(0 -1.400)"/>
<rect x="8" y="11.500" width="4.500" height="7" fill="#fff" stroke="#2b2b2b" stroke-width="1.100"/><rect x="10.800" y="14.500" width="1" height="1.500" fill="#2b2b2b"/></svg>
<svg style="left:473px;top:8px;" width="16" height="20" viewBox="0 0 16 20"><defs><linearGradient id="gdoc" x1="0" y1="0" x2="1" y2="1"><stop offset="0" stop-color="#fdfdfd"/><stop offset="1" stop-color="#d6d6d6"/></linearGradient></defs>
<path d="M1.600 2.600Q1.600 1.600 2.600 1.600H9.800L14.600 6.400V17.400Q14.600 18.400 13.600 18.400H2.600Q1.600 18.400 1.600 17.400Z" fill="url(#gdoc)" stroke="#444" stroke-width="1.100"/>
<path d="M9.800 1.600V6.400H14.600" fill="#f2f2f2" stroke="#444" stroke-width="1"/></svg>
<svg style="left:514px;top:8px;" width="22" height="20" viewBox="0 0 22 20"><defs><linearGradient id="gfo" x1="0" y1="0" x2="1" y2="1"><stop offset="0" stop-color="#fafafa"/><stop offset="1" stop-color="#cfcfcf"/></linearGradient></defs>
<path d="M1.600 18.400V4.200Q1.600 3.200 2.600 3.200H7.500L9 5H12" fill="#bdbdbd" stroke="#444" stroke-width="1.100"/>
<path d="M1.600 18.400L6.200 8.200H20.600L16 18.400Z" fill="url(#gfo)" stroke="#444" stroke-width="1.100" stroke-linejoin="round"/>
<path d="M8 2.200Q13.500 1.500 14.200 6.500H16.800L12.500 11.500L8.200 6.500H10.800Q10.500 3.800 8 2.200Z" fill="#3c9a1c" stroke="#2a7a10" stroke-width="0.500"/></svg>
<svg style="left:559px;top:8px;" width="20" height="20" viewBox="0 0 20 20"><path d="M1.600 2.600Q1.600 1.600 2.600 1.600H17.400Q18.400 1.600 18.400 2.600V17.400Q18.400 18.400 17.400 18.400H3.600L1.600 16.400Z" fill="#2d7fb2" stroke="#185a85" stroke-width="1.100"/>
<rect x="4.800" y="2.200" width="10.400" height="8" fill="#f4f4f4" stroke="#185a85" stroke-width="0.600"/>
<path d="M6.300 4.300H13.700M6.300 6.200H13.700M6.300 8.100H13.700" stroke="#8a8a8a" stroke-width="0.800"/>
<rect x="5.800" y="12.500" width="9" height="5.900" fill="#3a3a3a"/><rect x="8.200" y="13.500" width="2.600" height="4.200" fill="#b8b8b8"/><rect x="12.300" y="13.500" width="1.500" height="4.200" fill="#7d7d7d"/></svg>
<svg style="left:603px;top:8px;" width="20" height="20" viewBox="0 0 20 20"><rect x="5" y="1.800" width="10" height="7" fill="#f1f1f1" stroke="#8d8d8d" stroke-width="0.900"/>
<path d="M2.600 7.800H17.400Q18.600 7.800 18.600 9V14.500H1.400V9Q1.400 7.800 2.600 7.800Z" fill="#3b8fc2" stroke="#1d6596" stroke-width="0.900"/>
<rect x="4.200" y="11.800" width="11.600" height="2" fill="#1d2c38"/>
<path d="M3 14.500H17L16 18.500H4Z" fill="#ededed" stroke="#8d8d8d" stroke-width="0.900"/>
<rect x="14.800" y="9.300" width="2" height="1" fill="#d6ecf8"/></svg>
<svg style="left:648px;top:9px;" width="18" height="17" viewBox="0 0 18 17"><path d="M1 2.200L2.800 9.800L10 7.600L7.400 5.600Q12.200 3.800 13.600 8.600Q14.200 11.800 11 14.600L12.800 16Q17.800 12 16.400 7.200Q14.200 0.800 5.600 4Z" fill="#3589bd" stroke="#165a88" stroke-width="0.900" stroke-linejoin="round"/></svg>
<svg style="left:692px;top:9px;" width="18" height="17" viewBox="0 0 18 17"><path d="M17 2.200L15.200 9.800L8 7.600L10.600 5.600Q5.800 3.800 4.400 8.600Q3.800 11.800 7 14.600L5.200 16Q0.200 12 1.600 7.200Q3.800 0.800 12.400 4Z" fill="#dcdcdc" stroke="#c9c9c9" stroke-width="0.900" stroke-linejoin="round"/></svg>
<svg style="left:737px;top:6px;" width="16" height="22" viewBox="0 0 16 22"><path d="M2.400 2.400V18.400L6.300 15L9 21L11.500 19.900L8.800 14H13.800Z" fill="#fff" stroke="#222" stroke-width="1.100" stroke-linejoin="round"/></svg>
<svg style="left:783px;top:8px;" width="12" height="20" viewBox="0 0 12 20"><rect x="1.200" y="1" width="9.400" height="17.800" rx="4.700" fill="#1d1d1d"/>
<circle cx="5.900" cy="5.600" r="2.900" fill="#e8251a"/><circle cx="5.900" cy="5" r="1.100" fill="#ff8d7a"/>
<circle cx="5.900" cy="14.200" r="2.900" fill="#27b61f"/><circle cx="5.900" cy="13.600" r="1.100" fill="#8ff77f"/></svg>
<svg style="left:810px;top:8px;" width="18" height="20" viewBox="0 0 18 20"><rect x="1.600" y="1.600" width="15.200" height="16.800" fill="#f4f4f4" stroke="#333" stroke-width="1.200"/>
<rect x="3.600" y="3.700" width="3.600" height="3" fill="#4a9ccc" stroke="#1c5f8c" stroke-width="0.800"/><rect x="3.600" y="8.500" width="3.600" height="3" fill="#4a9ccc" stroke="#1c5f8c" stroke-width="0.800"/><rect x="3.600" y="13.300" width="3.600" height="3" fill="#4a9ccc" stroke="#1c5f8c" stroke-width="0.800"/>
<path d="M9 5.200H15M9 10H15M9 14.800H15" stroke="#333" stroke-width="1.100"/></svg>
<svg style="left:840px;top:8px;" width="18" height="20" viewBox="0 0 18 20"><g transform="translate(9 9.800)" fill="none" stroke="#3a3a3a" stroke-width="1.150"><circle r="2.600"/><path d="M5.49 -1.52L7.59 -1.30L7.59 1.30L5.49 1.52L4.96 2.81L6.29 4.45L4.45 6.29L2.81 4.96L1.52 5.49L1.30 7.59L-1.30 7.59L-1.52 5.49L-2.81 4.96L-4.45 6.29L-6.29 4.45L-4.96 2.81L-5.49 1.52L-7.59 1.30L-7.59 -1.30L-5.49 -1.52L-4.96 -2.81L-6.29 -4.45L-4.45 -6.29L-2.81 -4.96L-1.52 -5.49L-1.30 -7.59L1.30 -7.59L1.52 -5.49L2.81 -4.96L4.45 -6.29L6.29 -4.45L4.96 -2.81Z" stroke-linejoin="round"/></g></svg>
<svg style="left:1508px;top:9px;" width="16" height="15" viewBox="0 0 16 15"><rect x="0.600" y="0.600" width="14.600" height="13.800" fill="#1c1c1c" stroke="#555" stroke-width="1"/><path d="M3.500 3.500L7.500 7L3.500 10.500" fill="none" stroke="#fff" stroke-width="1.500"/><path d="M8 11.300H12.500" stroke="#fff" stroke-width="1.300"/></svg>
<svg style="left:1673px;top:10px;" width="15" height="15" viewBox="0 0 15 15"><circle cx="5.600" cy="5.600" r="4.300" fill="none" stroke="#8a8a8a" stroke-width="1.300"/><path d="M8.800 8.800L13.500 13.500" stroke="#8a8a8a" stroke-width="1.900"/></svg>
<svg style="left:1715px;top:8px;" width="20" height="20" viewBox="0 0 20 20"><circle cx="9.700" cy="9.600" r="8.200" fill="#fff" stroke="#2a2a2a" stroke-width="1.400"/><circle cx="9.700" cy="7.200" r="3.200" fill="#2a2a2a"/><path d="M3.700 14.600Q5 10.800 9.700 10.800Q14.400 10.800 15.700 14.600Q13.200 17.400 9.700 17.400Q6.200 17.400 3.700 14.600Z" fill="#2a2a2a"/></svg>
<svg style="left:1751px;top:8px;" width="20" height="20" viewBox="0 0 20 20"><circle cx="9.800" cy="9.600" r="8.200" fill="#fff" stroke="#2a2a2a" stroke-width="1.300"/><path d="M6.800 7.400Q6.800 4.600 9.800 4.600Q12.800 4.600 12.800 7.200Q12.800 8.800 11 9.800Q9.800 10.500 9.800 12" fill="none" stroke="#2a2a2a" stroke-width="1.700"/><rect x="8.900" y="13.400" width="1.900" height="1.900" fill="#2a2a2a"/></svg>
<div style="left:1792px;top:21px;width:10px;height:2px;background:#2a2a2a;"></div>
<svg style="left:1825px;top:10px;" width="17" height="16" viewBox="0 0 17 16"><rect x="1.600" y="1.600" width="13.800" height="12.800" fill="#fdfdfd" stroke="#2a2a2a" stroke-width="1.200"/><path d="M8.500 1.600V14.400" stroke="#2a2a2a" stroke-width="1.100"/><path d="M3.300 8H13.700M5.300 6L3.300 8L5.300 10M11.700 6L13.700 8L11.700 10" fill="none" stroke="#2a2a2a" stroke-width="1"/></svg>
<svg style="left:1861px;top:10px;" width="17" height="16" viewBox="0 0 17 16"><rect x="5.600" y="1.800" width="9.800" height="7.600" fill="none" stroke="#2a2a2a" stroke-width="1.300"/><rect x="1.600" y="6.200" width="9.800" height="7.600" fill="#f5f5f5" stroke="#2a2a2a" stroke-width="1.300"/></svg>
<svg style="left:1899px;top:12px;" width="12" height="12" viewBox="0 0 12 12"><path d="M1.300 1.300L10.700 10.700M10.700 1.300L1.300 10.700" stroke="#2a2a2a" stroke-width="1.500"/></svg>
<svg style="left:399px;top:9px;" width="16" height="16" viewBox="0 0 16 16"><path d="M9.500 1.500L14.500 6.500L12.800 7L10.300 9.500L10.300 12.300L3.800 5.800L6.600 5.800L9 3.200Z" fill="#9c9c9c"/><path d="M6.800 9.300L1.500 14.500" stroke="#9c9c9c" stroke-width="1.400"/></svg>
<svg style="left:0;top:34px" width="270" height="82" viewBox="0 34 270 82"><path d="M33 42.600H19.300V51.500Q19.300 57.300 25.500 57.300" fill="none" stroke="#2a6f92" stroke-width="2"/><path d="M37.300 50.300Q36.500 56.500 30.500 56.800L31 59.800L25.800 55.300L30.200 50.300L30.500 53.200Q34.500 53.300 37.300 50.300Z" fill="#2e7fb4" stroke="#2e7fb4" stroke-width="0.600" stroke-linejoin="round"/><path d="M83.200 42.600L90.400 49.800M74.300 52L81.300 59" fill="none" stroke="#2a6f92" stroke-width="2"/><path d="M77.500 50.500L81.500 46.500" stroke="#222" stroke-width="2.300"/><path d="M74.800 53.200L75.300 47.600L80.400 52.700Z" fill="#222"/><path d="M84.200 43.800L83.700 49.400L78.600 44.300Z" fill="#222"/><path d="M123 57L139 41.200" stroke="#2a6f92" stroke-width="1.900"/><rect x="120.90" y="54.90" width="4.2" height="4.2" fill="#fff" stroke="#111" stroke-width="1.100"/><rect x="136.90" y="39.10" width="4.2" height="4.2" fill="#fff" stroke="#111" stroke-width="1.100"/><circle cx="171" cy="48.900" r="8.100" fill="none" stroke="#2a6f92" stroke-width="1.800"/><rect x="169.10" y="47.10" width="3.8" height="3.8" fill="#fff" stroke="#111" stroke-width="1.100"/><rect x="175.30" y="41.10" width="3.8" height="3.8" fill="#fff" stroke="#111" stroke-width="1.100"/><path d="M203.800 56.800C205.500 46 207 41.300 208.800 41.500C211 41.800 210.500 55.500 213.300 55.500C215.500 55.500 216.800 48 218.200 41.200" fill="none" stroke="#2a6f92" stroke-width="1.900"/><path d="M244.500 43L258.500 40.500V54.500L244.500 57.300Z" fill="#ededed" stroke="#c2c2c2" stroke-width="0.900" stroke-dasharray="2 1.500"/><path d="M251.500 40V58M244.500 50L258.500 47.500" stroke="#d2d2d2" stroke-width="0.800" stroke-dasharray="2 1.500"/><rect x="123.200" y="70.300" width="15.600" height="10.600" fill="none" stroke="#2a6f92" stroke-width="1.900"/><rect x="136.90" y="68.10" width="4.2" height="4.2" fill="#fff" stroke="#111" stroke-width="1.100"/><rect x="120.90" y="78.90" width="4.2" height="4.2" fill="#fff" stroke="#111" stroke-width="1.100"/><path d="M164 78.300A7 7 0 0 1 178 78.300" fill="none" stroke="#2a6f92" stroke-width="1.800"/><rect x="169.10" y="68.30" width="3.8" height="3.8" fill="#fff" stroke="#111" stroke-width="1.100"/><rect x="162.10" y="76.40" width="3.8" height="3.8" fill="#fff" stroke="#111" stroke-width="1.100"/><rect x="176.10" y="76.40" width="3.8" height="3.8" fill="#fff" stroke="#111" stroke-width="1.100"/><path d="M169.800 77.200L172.200 79.600M172.200 77.200L169.800 79.600" stroke="#bdbdbd" stroke-width="0.800"/><ellipse cx="211" cy="74.900" rx="9.300" ry="6.300" transform="rotate(-38 211 74.900)" fill="none" stroke="#2a6f92" stroke-width="1.800"/><rect x="209.10" y="73.10" width="3.8" height="3.8" fill="#fff" stroke="#111" stroke-width="1.100"/><text x="251.100" y="82.600" font-family="'Liberation Serif',serif" font-size="23" text-anchor="middle" fill="#f4f4f4" stroke="#2a6f92" stroke-width="0.900">A</text><rect x="122.900" y="95.800" width="16" height="10.400" rx="5.200" fill="none" stroke="#2a6f92" stroke-width="1.900"/><rect x="125.20" y="99.20" width="3.6" height="3.6" fill="#fff" stroke="#111" stroke-width="1.100"/><rect x="133.20" y="99.20" width="3.6" height="3.6" fill="#fff" stroke="#111" stroke-width="1.100"/><path d="M163 101L167 94.300H175L179 101L175 107.700H167Z" fill="none" stroke="#2a6f92" stroke-width="1.900"/><rect x="169.10" y="99.10" width="3.8" height="3.8" fill="#fff" stroke="#111" stroke-width="1.100"/><path d="M202 92.900H210.500" stroke="#111" stroke-width="1.700"/><path d="M210.500 92.900Q219 92.900 219 101.500" fill="none" stroke="#2a6f92" stroke-width="1.800"/><path d="M219 101.500V110" stroke="#111" stroke-width="1.700"/><path d="M209.800 99.800L212.200 102.200M212.200 99.800L209.800 102.200" stroke="#c4c4c4" stroke-width="0.800"/><defs><linearGradient id="gpt" x1="0" y1="0" x2="1" y2="1"><stop offset="0" stop-color="#7cc8e6"/><stop offset="1" stop-color="#2e87b3"/></linearGradient></defs><rect x="248.500" y="98.400" width="5.500" height="5.500" fill="url(#gpt)" stroke="#1a5e84" stroke-width="1"/></svg>
<svg style="left:270px;top:34px" width="220" height="82" viewBox="270 34 220 82"><path d="M295.200 42.200V59.700M282.300 58H299.800" stroke="#2a6f92" stroke-width="1.900"/><path d="M287.300 46.800L288.800 45.600L296.300 52.300L293.800 52.800Z" fill="#3d8bb3" stroke="#174e73" stroke-width="0.600"/><path d="M287.300 54.300L288.800 55.500L296.300 48.700L293.800 48.200Z" fill="#3d8bb3" stroke="#174e73" stroke-width="0.600"/><path d="M296.200 48.800L300 45.800L296.800 46.200Z" fill="#1e1e1e"/><path d="M296.200 52.300L300 55.300L296.800 54.900Z" fill="#1e1e1e"/><path d="M293.600 50.500L296.500 48.500M293.600 50.500L296.500 52.600" stroke="#555" stroke-width="0.700"/><circle cx="285.600" cy="45.7" r="3.200" fill="#3d8bb3" stroke="#174e73" stroke-width="0.900"/><circle cx="285.600" cy="45.7" r="1.250" fill="#f4f8fa" stroke="#174e73" stroke-width="0.500"/><circle cx="285.600" cy="55.3" r="3.200" fill="#3d8bb3" stroke="#174e73" stroke-width="0.900"/><circle cx="285.600" cy="55.3" r="1.250" fill="#f4f8fa" stroke="#174e73" stroke-width="0.500"/><defs><linearGradient id="gcv" x1="0" y1="0" x2="1" y2="0"><stop offset="0" stop-color="#ffffff"/><stop offset="1" stop-color="#c4c4c4"/></linearGradient></defs><path d="M332.600 47L341.500 42.200L347.600 45.500V55.500L338.500 59.700L332.600 56.200Z" fill="url(#gcv)" stroke="#1e1e1e" stroke-width="1.100" stroke-linejoin="round"/><path d="M332.600 47L338.500 50L347.600 45.500" fill="none" stroke="#8a8a8a" stroke-width="0.900"/><path d="M338.500 50V59.500" stroke="#2a6f92" stroke-width="1.700"/><path d="M398 58.800H385.500Q381 58.800 381 54.300V42.800H392.800" fill="none" stroke="#1e1e1e" stroke-width="1.900"/><path d="M394.700 56H387.200Q384.400 56 384.400 53.200V45.800H390.700" fill="none" stroke="#2a6f92" stroke-width="1.700"/><path d="M428.300 50.500L437.500 42.300L445.500 48.500Q441 52.500 437.500 59.300Q433.500 53.500 428.300 50.500Z" fill="#f0f0f0" stroke="#c6c6c6" stroke-width="1"/><path d="M432 50L437.800 45.200L442 48.300Q439.500 50.800 437.500 54.300Q435 51.800 432 50Z" fill="none" stroke="#d4d4d4" stroke-width="0.900"/><path d="M472.700 40V57.700" stroke="#1e1e1e" stroke-width="1.100"/><path d="M464.500 43.700H467.900V47.900H470.400V51.900H467.900V54.700H464.500Z" fill="none" stroke="#2a6f92" stroke-width="1"/><path d="M481 43.700H477.600V47.900H475.100V51.900H477.600V54.700H481Z" fill="none" stroke="#1e1e1e" stroke-width="1"/><path d="M465 67.3H468.5V68.6H471V71.3H468.5V73.0H465Z" fill="none" stroke="#1e1e1e" stroke-width="1"/><path d="M474.5 67.3H478.0V68.6H480.5V71.3H478.0V73.0H474.5Z" fill="none" stroke="#1e1e1e" stroke-width="1"/><path d="M465 76H468.5V77.3H471V80H468.5V81.7H465Z" fill="none" stroke="#2a6f92" stroke-width="1"/><path d="M474.5 76H478.0V77.3H480.5V80H478.0V81.7H474.5Z" fill="none" stroke="#1e1e1e" stroke-width="1"/><path d="M464.800 99.300L470.500 93.600" stroke="#1e1e1e" stroke-width="1.700"/><path d="M466.800 92.300H471.800V97.300Z" fill="#1e1e1e"/><rect x="475.300" y="93.200" width="5.600" height="5.600" fill="#f4f4f4" stroke="#2a6f92" stroke-width="1.800"/><rect x="464.5" y="102.7" width="1.400" height="1.400" fill="#cfcfcf"/><rect x="464.5" y="105.5" width="1.400" height="1.400" fill="#cfcfcf"/><rect x="464.5" y="108.3" width="1.400" height="1.400" fill="#cfcfcf"/><rect x="467.3" y="102.7" width="1.400" height="1.400" fill="#cfcfcf"/><rect x="467.3" y="108.3" width="1.400" height="1.400" fill="#cfcfcf"/><rect x="470.1" y="102.7" width="1.400" height="1.400" fill="#cfcfcf"/><rect x="470.1" y="105.5" width="1.400" height="1.400" fill="#cfcfcf"/><rect x="470.1" y="108.3" width="1.400" height="1.400" fill="#cfcfcf"/></svg>
<svg style="left:650px;top:34px" width="330" height="82" viewBox="650 34 330 82"><path d="M675.800 42V55.800M670.500 55.800H682" stroke="#1e1e1e" stroke-width="1.700"/><path d="M678 55.300Q683.700 49.300 689.600 55.300Q683.700 60.800 678 55.300Z" fill="#fff" stroke="#1e1e1e" stroke-width="1"/><circle cx="683.800" cy="55.200" r="2.300" fill="#1e1e1e"/><circle cx="684.400" cy="54.500" r="0.700" fill="#fff"/><path d="M747.500 42.900H735.700V53.300Q735.700 58.600 741 58.600H753" fill="none" stroke="#1e1e1e" stroke-width="1.700"/><g transform="rotate(-41 746 50.700) translate(746 50.700) scale(0.860 0.950) translate(-746 -50.700)" fill="#3c8fc6" stroke="#1c5f90" stroke-width="0.700" stroke-linejoin="round"><path d="M740.500 49.600H751.500V51.800H740.500Z"/><path d="M751 48.300Q753.500 47 755.300 48.300L752.800 50.700L755.300 53.100Q753.500 54.400 751 53.100Q749.500 50.700 751 48.300Z"/><path d="M741 48.300Q738.500 47 736.700 48.300L739.200 50.700L736.700 53.100Q738.500 54.400 741 53.100Q742.500 50.700 741 48.300Z"/></g><path d="M781 59.500V43H798" fill="none" stroke="#2a6f92" stroke-width="1.900"/><circle cx="790" cy="52" r="6.300" fill="none" stroke="#1e1e1e" stroke-width="1.600"/><circle cx="790" cy="52" r="1.900" fill="#6fb2d4" stroke="#2a6f92" stroke-width="0.900"/><path d="M829 47H844M829 52H844M834 44V58M839.500 44V58" stroke="#dfe6ea" stroke-width="0.800"/><path d="M833 42.900H826.800V53.300Q826.800 58.600 832.100 58.600H844" fill="none" stroke="#2a6f92" stroke-width="1.700"/><path d="M839.800 42L844 41.900L841.300 45.300L843.800 45.200L832.300 53L837.300 47.200L834.800 47.300Z" fill="#f5a81c" stroke="#c87a10" stroke-width="0.600" stroke-linejoin="round"/><path d="M891.500 42.900H878.800V53.300Q878.800 58.600 884.100 58.600H896" fill="none" stroke="#d8e6ee" stroke-width="3.200" stroke-opacity="0.700"/><path d="M891.500 42.900H878.800V53.300Q878.800 58.600 884.100 58.600H896" fill="none" stroke="#2a6f92" stroke-width="1.700"/><path d="M883.500 46.200L885.800 43.300L896.800 50.200L894.500 53.500Z" fill="#f1d23a" stroke="#6d5d10" stroke-width="0.800"/><path d="M887.500 45.500L886.500 47M890 47L889 48.600M892.500 48.600L891.500 50.200" stroke="#5a4a10" stroke-width="0.700"/><path d="M884 50.300L891.500 54.500L892.300 53L895.500 57.300L890 57.300L890.800 55.800L883.300 51.700Z" fill="#2e7fb4" stroke="#1d5f8d" stroke-width="0.500"/><defs><linearGradient id="gsc" x1="0" y1="0" x2="1" y2="1"><stop offset="0" stop-color="#64b0da"/><stop offset="1" stop-color="#2f7fae"/></linearGradient></defs><path d="M948 42.600L955 54H941Z" fill="url(#gsc)" stroke="#1d5f8d" stroke-width="1" stroke-linejoin="round"/><circle cx="942.800" cy="54.200" r="4.800" fill="url(#gsc)" fill-opacity="0.900" stroke="#1d5f8d" stroke-width="1"/></svg>
<svg style="left:905px;top:118px" width="340" height="30" viewBox="905 118 340 30"><defs>
<radialGradient id="glens" cx="0.4" cy="0.35" r="0.7"><stop offset="0" stop-color="#ffffff"/><stop offset="1" stop-color="#d9dde0"/></radialGradient>
<linearGradient id="gblu" x1="0" y1="0" x2="1" y2="1"><stop offset="0" stop-color="#a9d8ee"/><stop offset="1" stop-color="#5fa5cb"/></linearGradient>
<linearGradient id="gmon" x1="0" y1="0" x2="1" y2="1"><stop offset="0" stop-color="#d2d2d2"/><stop offset="1" stop-color="#f2f2f2"/></linearGradient>
<radialGradient id="gsph" cx="0.35" cy="0.3" r="0.8"><stop offset="0" stop-color="#f6f6f6"/><stop offset="1" stop-color="#d6d6d6"/></radialGradient>
</defs><path d="M919.800 133.600L914.300 139.700" stroke="#718694" stroke-width="4.200" stroke-linecap="round"/><path d="M919.800 133.600L914.300 139.700" stroke="#93c6e0" stroke-width="2.600" stroke-linecap="round"/><circle cx="923.800" cy="129.300" r="6.300" fill="url(#glens)" stroke="#7d858b" stroke-width="1.300"/><path d="M923.800 125.200L925.300 127H922.300ZM923.800 133.400L925.300 131.600H922.300ZM919.700 129.300L921.500 127.800V130.800ZM927.900 129.300L926.100 127.800V130.800Z" fill="#555"/><rect x="943.600" y="123.600" width="12.200" height="11.800" fill="none" stroke="#4a4a4a" stroke-width="1" stroke-dasharray="2.500 1.500"/><path d="M943.800 135.300L938.800 140.700" stroke="#718694" stroke-width="4.200" stroke-linecap="round"/><path d="M943.800 135.300L938.800 140.700" stroke="#93c6e0" stroke-width="2.600" stroke-linecap="round"/><circle cx="947.600" cy="131" r="6.200" fill="url(#glens)" stroke="#7d858b" stroke-width="1.300"/><path d="M964.800 134.500L976.800 124.800L978.300 123.600L981.600 126.600L980.600 128.200L970.300 140.200Q966 140 964.800 134.500Z" fill="#ebebeb" stroke="#9a9a9a" stroke-width="1" stroke-linejoin="round"/><path d="M971 129.500L975.300 134.300M975.800 125.600L979.800 129.300M973.500 127.500L977.600 131.800" stroke="#a8a8a8" stroke-width="0.800"/><ellipse cx="967.400" cy="137.600" rx="3" ry="1.500" transform="rotate(48 967.400 137.600)" fill="#fafafa" stroke="#a5a5a5" stroke-width="0.700"/><path d="M972.800 136.600L977.300 132.800V135.200H982.200V138H977.300V140.400Z" fill="#4f95c0"/><path d="M990.800 128.800Q999 122.300 1007.300 128.300V136.800Q1004.500 138.500 1003.200 138V131.500Q999 128.300 994.800 131.800V140.200Q992 139.800 990.800 137.500Z" fill="#e4e7ea" stroke="#8a9197" stroke-width="0.900" stroke-linejoin="round"/><path d="M994.800 131.800Q999 128.300 1003.200 131.500V138Q999 135.500 994.800 140.200Z" fill="#cfd2d6" stroke="#8a9197" stroke-width="0.700"/><path d="M990.800 129.800L994.800 132.300V140.200L990.800 137.500Z" fill="#7ab7d6" stroke="#2d6f95" stroke-width="0.900"/><path d="M1003.200 131.800L1007.300 129.300V136.800L1003.200 138Z" fill="#7ab7d6" stroke="#2d6f95" stroke-width="0.900"/><path d="M991 134L994.500 131.300M991 137L994.500 134.500M1003.500 134.500L1007 132M1003.500 137.300L1007 134.800" stroke="#2d6f95" stroke-width="0.800"/><path d="M1016.300 128.300L1021.500 123.600H1033.500V136L1028.500 140.500" fill="#fafafa" stroke="#4d4d4d" stroke-width="0.900"/><path d="M1028.500 128.300L1033.500 123.600" stroke="#4d4d4d" stroke-width="0.900"/><rect x="1016.300" y="128.300" width="12.200" height="12.200" fill="url(#gblu)" stroke="#2d6f95" stroke-width="1"/><path d="M1027 124V127.500M1025.800 126L1027 127.600L1028.200 126M1033 132H1029.500M1031 130.800L1029.400 132L1031 133.200" fill="none" stroke="#333" stroke-width="0.900"/><path d="M1041.3 130.45H1047.3L1044.3 133.95Z" fill="#9a9a9a"/><path d="M1057.500 126L1066.500 122.300L1073.500 125.500V137L1064 140.600L1057.500 137.500Z" fill="#f4f4f4" stroke="#7d8b94" stroke-width="1" stroke-linejoin="round"/><path d="M1057.500 126L1064 128.800V140.600L1057.500 137.500Z" fill="#79b7d8"/><path d="M1064 128.800L1068 127V139L1064 140.600Z" fill="#b4daee"/><path d="M1057.500 126L1064 128.800L1073.500 125.500" fill="none" stroke="#7d8b94" stroke-width="0.800"/><path d="M1064 128.800V140.600" stroke="#3d7fa5" stroke-width="0.900"/><path d="M1081.4 130.45H1087.4L1084.4 133.95Z" fill="#9a9a9a"/><path d="M1096.300 132Q1105 123.500 1113.800 132Q1105 141 1096.300 132Z" fill="#ececec" stroke="#a0a0a0" stroke-width="1.100"/><circle cx="1104.500" cy="131.500" r="3.700" fill="#8a8a8a"/><path d="M1105.300 125V139.800" stroke="#7a7a7a" stroke-width="1"/><path d="M1105.800 128Q1109 129 1108.500 134Q1107.500 135.500 1105.800 135.200Z" fill="#b8b8b8"/><path d="M1121.5 130.45H1127.5L1124.5 133.95Z" fill="#9a9a9a"/><circle cx="1143.500" cy="129.400" r="7.800" fill="url(#gsph)" stroke="#e0e0e0" stroke-width="0.800"/><path d="M1152 128.300L1155 131L1146 140.300L1142.300 141.500L1143.300 137.800Z" fill="#f3f3f3" stroke="#d4d4d4" stroke-width="0.900" stroke-linejoin="round"/><rect x="1161.200" y="130" width="18.600" height="11.600" fill="#4a4a4a"/><rect x="1163" y="132" width="2.800" height="2.200" fill="#f2f2f2"/><rect x="1169" y="132" width="2.800" height="2.200" fill="#f2f2f2"/><rect x="1175" y="132" width="2.800" height="2.200" fill="#f2f2f2"/><rect x="1166" y="135.3" width="2.800" height="2.200" fill="#f2f2f2"/><rect x="1172" y="135.3" width="2.800" height="2.200" fill="#f2f2f2"/><rect x="1163.5" y="138.6" width="2.800" height="2.200" fill="#f2f2f2"/><rect x="1170" y="138.6" width="2.800" height="2.200" fill="#f2f2f2"/><rect x="1176" y="138.6" width="2.800" height="2.200" fill="#f2f2f2"/><g><clipPath id="csc"><circle cx="1170.400" cy="129.300" r="7.500"/></clipPath><g clip-path="url(#csc)"><rect x="1162" y="121" width="8.600" height="9" fill="#4b86d8"/><rect x="1170.600" y="121" width="9" height="9" fill="#d93a3a"/><rect x="1162" y="130" width="8.600" height="8" fill="#38a838"/><rect x="1170.600" y="130" width="9" height="8" fill="#f0c43a"/><circle cx="1167.500" cy="126" r="3.500" fill="#fff" fill-opacity="0.450"/></g></g><path d="M1187.6 130.45H1193.6L1190.6 133.95Z" fill="#9a9a9a"/><rect x="1202.600" y="124.600" width="17" height="11" fill="url(#gmon)" stroke="#7c7c7c" stroke-width="1.300"/><path d="M1211 136V138.500" stroke="#6e6e6e" stroke-width="2.200"/><path d="M1207 139.300H1215" stroke="#6e6e6e" stroke-width="1.400"/><path d="M1227.5 130.45H1233.5L1230.5 133.95Z" fill="#9a9a9a"/></svg>
<svg style="left:1780px;top:118px" width="136" height="100" viewBox="1780 118 136 100"><rect x="1791.500" y="125.800" width="11.300" height="12.800" fill="none" stroke="#9c9c9c" stroke-width="1.100"/><path d="M1791.500 126.300H1802.800" stroke="#9c9c9c" stroke-width="2"/><path d="M1792 132.500L1796.300 129V136Z" fill="#9c9c9c"/><rect x="1817.600" y="125.800" width="11.300" height="12.800" fill="none" stroke="#9c9c9c" stroke-width="1.100"/><path d="M1817.600 126.300H1828.900" stroke="#9c9c9c" stroke-width="2"/><path d="M1828.400 132.500L1824.100 129V136Z" fill="#9c9c9c"/><rect x="1844" y="136" width="10" height="1.800" fill="#9c9c9c"/><rect x="1873.600" y="125.800" width="8.800" height="7.500" fill="none" stroke="#9c9c9c" stroke-width="1.100"/><path d="M1873.600 126.300H1882.400" stroke="#9c9c9c" stroke-width="1.900"/><rect x="1868.600" y="130.700" width="8.800" height="7.700" fill="#fff" stroke="#9c9c9c" stroke-width="1.100"/><path d="M1868.600 131.200H1877.400" stroke="#9c9c9c" stroke-width="1.900"/><path d="M1896.200 127.600L1905.800 137.200M1905.800 127.600L1896.200 137.200" stroke="#9c9c9c" stroke-width="1.300"/><path d="M1838.500 151.600H1818.700V168.500Q1818.700 176 1826.500 176H1840" fill="none" stroke="#cfdfeb" stroke-width="1.700"/><path d="M1861.800 165.500Q1861 177.300 1850.300 178L1850.800 185L1839.800 176.300L1848.800 168.300L1849.300 172.800Q1857 172.300 1861.800 165.500Z" fill="#d4e3ee" stroke="#c3d6e4" stroke-width="0.800" stroke-linejoin="round"/><path d="M1867 182.800L1875.200 190.500L1883.400 182.800L1886.500 186L1878.700 194L1886.500 202L1883.400 205.200L1875.200 197.500L1867 205.200L1863.900 202L1871.700 194L1863.900 186Z" fill="#f4cccc" stroke="#f0bcbc" stroke-width="0.800" stroke-linejoin="round"/></svg>
<div style="left:1894px;top:169px;width:22px;height:142px;background:#d4d4d4;border:1px solid #8f8f8f;border-right:none;box-sizing:border-box;"></div>
<div style="left:1895px;top:263px;width:21px;height:24px;background:#f6f6f6;"></div>
<div style="left:1894px;top:192.5px;width:22px;height:1px;background:#8f8f8f;"></div>
<div style="left:1894px;top:216px;width:22px;height:1px;background:#8f8f8f;"></div>
<div style="left:1894px;top:239.5px;width:22px;height:1px;background:#8f8f8f;"></div>
<div style="left:1894px;top:263px;width:22px;height:1px;background:#8f8f8f;"></div>
<div style="left:1894px;top:287px;width:22px;height:1px;background:#8f8f8f;"></div>
<svg style="left:1894px;top:168px;overflow:hidden" width="22" height="144" viewBox="1894 168 22 144"><path d="M1900.300 180.500V188.300H1913.700V180.500" fill="#fff" stroke="#2b2b2b" stroke-width="1.200"/><path d="M1898 181L1907 172.200L1916 181" fill="none" stroke="#256a93" stroke-width="2.400"/><rect x="1905.300" y="182.800" width="3.800" height="5.500" fill="#fff" stroke="#2b2b2b" stroke-width="1"/><path d="M1900.3 198.0L1903.1 195.7L1905.6 196.7V209.0L1902.8 211.3L1900.3 210.3Z" fill="#f6f6f6" stroke="#2b2b2b" stroke-width="0.900" stroke-linejoin="round"/><path d="M1900.3 198.0L1902.8 199.0L1905.6 196.7M1902.8 199.0V211.3" fill="none" stroke="#2b2b2b" stroke-width="0.700"/><path d="M1904.6 197.1L1907.3999999999999 194.79999999999998L1909.8999999999999 195.79999999999998V208.1L1907.1 210.4L1904.6 209.4Z" fill="#f6f6f6" stroke="#2b2b2b" stroke-width="0.900" stroke-linejoin="round"/><path d="M1904.6 197.1L1907.1 198.1L1909.8999999999999 195.79999999999998M1907.1 198.1V210.4" fill="none" stroke="#2b2b2b" stroke-width="0.700"/><path d="M1908.8999999999999 196.2L1911.6999999999998 193.89999999999998L1914.1999999999998 194.89999999999998V207.2L1911.3999999999999 209.5L1908.8999999999999 208.5Z" fill="#f6f6f6" stroke="#2b2b2b" stroke-width="0.900" stroke-linejoin="round"/><path d="M1908.8999999999999 196.2L1911.3999999999999 197.2L1914.1999999999998 194.89999999999998M1911.3999999999999 197.2V209.5" fill="none" stroke="#2b2b2b" stroke-width="0.700"/><path d="M1898.500 235.500V222.500Q1898.500 221.500 1899.500 221.500H1904L1905.500 223.500H1916" fill="#ddd" stroke="#3a3a3a" stroke-width="1"/><path d="M1898.500 235.500L1902.500 226.800H1918L1914 235.500Z" fill="#f6f6f6" stroke="#3a3a3a" stroke-width="1" stroke-linejoin="round"/><rect x="1898.500" y="244" width="17" height="15.500" rx="1.500" fill="#f4f4f4" stroke="#3a3a3a" stroke-width="1"/><rect x="1900.500" y="246.300" width="8.500" height="3.300" fill="#f4c832" stroke="#7d6510" stroke-width="0.700"/><rect x="1911.500" y="246.300" width="2.800" height="2.800" fill="#f4c832" stroke="#7d6510" stroke-width="0.700"/><path d="M1903.500 251.500H1906.500V254.500H1909.500V257.500H1900.500V254.500H1903.500Z" fill="#f4c832" stroke="#7d6510" stroke-width="0.700"/><rect x="1912" y="251.500" width="2.500" height="6" fill="#9a9a9a" stroke="#555" stroke-width="0.600"/><clipPath id="cab"><circle cx="1907.300" cy="275" r="8"/></clipPath><g clip-path="url(#cab)"><rect x="1899" y="266" width="8.800" height="9.500" fill="#3f7fd6"/><rect x="1907.800" y="266" width="9" height="9.500" fill="#d83434"/><rect x="1899" y="275.500" width="8.800" height="9" fill="#36a336"/><rect x="1907.800" y="275.500" width="9" height="9" fill="#eec23a"/><circle cx="1904.500" cy="271.500" r="3.600" fill="#fff" fill-opacity="0.400"/></g><circle cx="1907.300" cy="275" r="8" fill="none" stroke="#7d7d7d" stroke-width="0.600"/><rect x="1898.500" y="290" width="17.500" height="17.500" fill="#f8f8f8" stroke="#1a3a50" stroke-width="1.100"/><rect x="1898.500" y="290" width="17.500" height="3" fill="#4a9ccc" stroke="#1a3a50" stroke-width="0.900"/><rect x="1900.600" y="296.300" width="3.300" height="2.200" fill="#4a9ccc" stroke="#1c5f8c" stroke-width="0.600"/><rect x="1900.600" y="300" width="3.300" height="2.200" fill="#4a9ccc" stroke="#1c5f8c" stroke-width="0.600"/><rect x="1900.600" y="303.700" width="3.300" height="2.200" fill="#4a9ccc" stroke="#1c5f8c" stroke-width="0.600"/><path d="M1905.500 297.400H1914.500M1905.500 301.100H1914.500M1905.500 304.800H1914.500" stroke="#333" stroke-width="0.900"/></svg>
<svg style="left:0;top:160px" width="229" height="365" viewBox="0 160 229 365"><g transform="translate(12 164.8) scale(1.0)"><path d="M0.500 6.200L3.700 4.400V2.200L8.100 0.400L12.500 1.900L12.800 7L16.800 9.100V14.200L11.400 17.700L0.500 11Z" fill="#f2c52c" stroke="#4f4006" stroke-width="1.100" stroke-linejoin="round"/>
<path d="M3.700 2.200L8.100 0.400L12.500 1.900L8.300 4.300Z" fill="#fde878"/><path d="M8.300 9L12.800 7L16.800 9.100L11.400 12.300Z" fill="#fde878"/><path d="M0.500 6.200L3.700 4.400L3.700 7.200L1.200 6.600Z" fill="#fde878"/>
<path d="M11.400 12.300L16.800 9.100V14.200L11.400 17.700Z" fill="#e0ac14"/><path d="M8.300 4.300L12.500 1.900L12.800 7L8.300 9Z" fill="#e8b41c"/>
<path d="M3.700 2.200L8.300 4.300L12.500 1.900M8.300 4.300V9L11.400 12.300L16.800 9.100M11.400 12.300V17.700M8.300 9L12.800 7M0.500 6.200L3.700 7.600V4.400" fill="none" stroke="#4f4006" stroke-width="0.800" stroke-linejoin="round"/></g><rect x="51.500" y="165.800" width="16.500" height="16.500" rx="1" fill="#f4f4f4" stroke="#333" stroke-width="1.100"/><rect x="51.500" y="165.800" width="16.500" height="2.800" fill="#4a9ccc" stroke="#1c5f8c" stroke-width="0.900"/><rect x="53.500" y="170.800" width="3.300" height="2.200" fill="#4a9ccc" stroke="#1c5f8c" stroke-width="0.600"/><rect x="53.500" y="174.600" width="3.300" height="2.200" fill="#4a9ccc" stroke="#1c5f8c" stroke-width="0.600"/><rect x="53.500" y="178.400" width="3.300" height="2.200" fill="#4a9ccc" stroke="#1c5f8c" stroke-width="0.600"/><path d="M58.500 171.900H66M58.500 175.700H66M58.500 179.500H66" stroke="#333" stroke-width="1"/><rect x="93.300" y="165.800" width="2.400" height="16.600" fill="#fafafa" stroke="#2a2a2a" stroke-width="1"/><path d="M95.700 170H100M95.700 179H102.500" stroke="#2a2a2a" stroke-width="1.200"/><rect x="98.300" y="166.200" width="5" height="5" rx="0.800" fill="#e2e2e2" stroke="#8a8a8a" stroke-width="0.700"/><rect x="99.700" y="167.600" width="5" height="5" rx="0.800" fill="#fdfdfd" stroke="#2a2a2a" stroke-width="1"/><rect x="100.800" y="175.300" width="5" height="5" rx="0.800" fill="#e2e2e2" stroke="#8a8a8a" stroke-width="0.700"/><rect x="102.200" y="176.600" width="4.800" height="4.800" rx="0.800" fill="#fdfdfd" stroke="#2a2a2a" stroke-width="1"/><circle cx="140" cy="174" r="5.800" fill="none" stroke="#1a1a1a" stroke-width="1.700"/><path d="M140 165V183M131 174H149" stroke="#1a1a1a" stroke-width="1.500"/><clipPath id="cdm"><circle cx="180.100" cy="173" r="8.800"/></clipPath><g clip-path="url(#cdm)"><rect x="171" y="164" width="19" height="19" fill="#e8c32a"/><path d="M171 164H181L176 176L171 178Z" fill="#3a78d2"/><path d="M171 176L177 174L181 183H171Z" fill="#35a035"/><path d="M178 163L190 164V173L176.500 175.500Z" fill="#d42a2a"/><circle cx="176" cy="169" r="3.300" fill="#fff" fill-opacity="0.450"/><ellipse cx="185.200" cy="169.300" rx="2.300" ry="4.600" transform="rotate(-32 185.200 169.300)" fill="#161616"/></g><circle cx="180.100" cy="173" r="8.800" fill="none" stroke="#6a5a2a" stroke-width="0.500"/><defs><linearGradient id="gfun" x1="0" y1="0" x2="1" y2="0"><stop offset="0" stop-color="#fff"/><stop offset="0.550" stop-color="#f4f4f4"/><stop offset="1" stop-color="#a8b0b5"/></linearGradient><linearGradient id="gfb" x1="0" y1="0" x2="0" y2="1"><stop offset="0" stop-color="#2f8fbd"/><stop offset="0.5" stop-color="#9adcf0"/><stop offset="1" stop-color="#2f8fbd"/></linearGradient></defs><path d="M7.300 195.500L13.200 202.500V208.300L15.800 209.700V202.500L21.700 195.500Z" fill="url(#gfun)" stroke="#2e2e2e" stroke-width="1" stroke-linejoin="round"/><rect x="6.300" y="192.300" width="16.600" height="3.500" rx="1.700" fill="url(#gfb)" stroke="#1c5f8c" stroke-width="0.800"/><g transform="translate(3.3 214.8) scale(1.0)"><path d="M0.500 6.200L3.700 4.400V2.200L8.100 0.400L12.500 1.900L12.800 7L16.800 9.100V14.200L11.400 17.700L0.500 11Z" fill="#f2c52c" stroke="#4f4006" stroke-width="1.100" stroke-linejoin="round"/>
<path d="M3.700 2.200L8.100 0.400L12.500 1.900L8.300 4.300Z" fill="#fde878"/><path d="M8.300 9L12.800 7L16.800 9.100L11.400 12.300Z" fill="#fde878"/><path d="M0.500 6.200L3.700 4.400L3.700 7.200L1.200 6.600Z" fill="#fde878"/>
<path d="M11.400 12.300L16.800 9.100V14.200L11.400 17.700Z" fill="#e0ac14"/><path d="M8.300 4.300L12.500 1.900L12.800 7L8.300 9Z" fill="#e8b41c"/>
<path d="M3.700 2.200L8.300 4.300L12.500 1.900M8.300 4.300V9L11.400 12.300L16.800 9.100M11.400 12.300V17.700M8.300 9L12.800 7M0.500 6.200L3.700 7.600V4.400" fill="none" stroke="#4f4006" stroke-width="0.800" stroke-linejoin="round"/></g><path d="M25.5 254.2V240Q25.5 238.8 26.7 238.8H31.2Q32 238.8 32.5 239.6L33.3 240.8H41.3Q42.5 240.8 42.5 242V254.2Z" fill="#e3e3e3" stroke="#4a4a4a" stroke-width="1" stroke-linejoin="round"/><path d="M27 243H41V253H27Z" fill="#fbfbfb" stroke="#bdbdbd" stroke-width="0.500"/><circle cx="35.500" cy="248" r="4" fill="#fff" stroke="#333" stroke-width="0.900"/><path d="M35.500 245.500V248.200L37.500 249" fill="none" stroke="#333" stroke-width="0.800"/><path d="M28.500 247L30.300 250.500L33 248Q30.500 247.800 28.500 247Z" fill="#2e7fb4"/><path d="M30.500 249.500Q32 253.500 36 252.800" fill="none" stroke="#2e7fb4" stroke-width="1.300"/><path d="M25.5 276.2V262Q25.5 260.8 26.7 260.8H31.2Q32 260.8 32.5 261.6L33.3 262.8H41.3Q42.5 262.8 42.5 264V276.2Z" fill="#e3e3e3" stroke="#4a4a4a" stroke-width="1" stroke-linejoin="round"/><path d="M27 265H41V275H27Z" fill="#fbfbfb" stroke="#bdbdbd" stroke-width="0.500"/><circle cx="34.500" cy="270.300" r="4.300" fill="#fff" stroke="#333" stroke-width="1"/><path d="M34.500 270.300L37 267.500" stroke="#333" stroke-width="0.900"/><path d="M38.700 271.500A4.300 4.300 0 0 1 36 274.400L34.500 270.300Z" fill="#d83434"/><path d="M31.800 268L32.500 268.800M34.500 266.800V267.800" stroke="#333" stroke-width="0.600"/><path d="M25.5 298.2V284Q25.5 282.8 26.7 282.8H31.2Q32 282.8 32.5 283.6L33.3 284.8H41.3Q42.5 284.8 42.5 286V298.2Z" fill="#e3e3e3" stroke="#4a4a4a" stroke-width="1" stroke-linejoin="round"/><path d="M27 287H41V297H27Z" fill="#fbfbfb" stroke="#bdbdbd" stroke-width="0.500"/><text x="34.500" y="297" font-family="'Liberation Serif',serif" font-size="13.500" font-weight="700" text-anchor="middle" fill="#2a6f92">A</text><path d="M25.5 320.2V306Q25.5 304.8 26.7 304.8H31.2Q32 304.8 32.5 305.6L33.3 306.8H41.3Q42.5 306.8 42.5 308V320.2Z" fill="#e3e3e3" stroke="#4a4a4a" stroke-width="1" stroke-linejoin="round"/><path d="M27 309H41V319H27Z" fill="#fbfbfb" stroke="#bdbdbd" stroke-width="0.500"/><path d="M31 312L34.500 310L38.500 311.500V316.500L35 318.500L31 317Z" fill="#3c8fc6" stroke="#123f5e" stroke-width="0.900" stroke-linejoin="round"/><path d="M31 312L35 313.500L38.500 311.500M35 313.500V318.500" fill="none" stroke="#123f5e" stroke-width="0.800"/><circle cx="26.600" cy="326.300" r="1.700" fill="#e8f2fa" stroke="#4a6a80" stroke-width="0.800"/><circle cx="26.600" cy="332" r="1.700" fill="#4a9ccc" stroke="#1c5f8c" stroke-width="0.800"/><circle cx="26.600" cy="338.500" r="1.700" fill="#f0cc30" stroke="#7d6510" stroke-width="0.800"/><path d="M30 326.300H41.500M30 332H41.500M30 338.500H35.500" stroke="#1a1a1a" stroke-width="1.500"/><circle cx="39.800" cy="338.800" r="2.700" fill="#1a1a1a"/><circle cx="39.800" cy="338.800" r="3.400" fill="none" stroke="#1a1a1a" stroke-width="1.500" stroke-dasharray="1.300 1.370"/><circle cx="39.800" cy="338.800" r="1" fill="#f5f5f5"/><path d="M28 352.0L40.5 348.5V361.5L28 365.0Z" fill="#fafafa" stroke="#333" stroke-width="1"/><path d="M34.5 347.0V367.0" stroke="#333" stroke-width="1" stroke-dasharray="3.500 1.800"/><path d="M28 374.0L40.5 370.5V383.5L28 387.0Z" fill="#fafafa" stroke="#333" stroke-width="1"/><path d="M34.5 369.0V389.0" stroke="#333" stroke-width="1" stroke-dasharray="3.500 1.800"/><path d="M28 396.0L40.5 392.5V405.5L28 409.0Z" fill="#fafafa" stroke="#333" stroke-width="1"/><path d="M34.5 391.0V411.0" stroke="#333" stroke-width="1" stroke-dasharray="3.500 1.800"/><path d="M27.700 416V427.500H40.500" fill="none" stroke="#1a1a1a" stroke-width="1.900"/><path d="M27.700 413.200L30.200 417.500H25.200ZM43.300 427.500L39 430V425Z" fill="#1a1a1a"/><rect x="26.200" y="426" width="3" height="3" fill="#1a1a1a"/><path d="M32.5 438.0L36 436.2L42.5 438.8V450.0L39 452.0L32.5 449.5Z" fill="#f8f8f8" stroke="#333" stroke-width="1" stroke-linejoin="round"/><path d="M32.5 438.0L39 440.5L42.5 438.8M39 440.5V452.0" fill="none" stroke="#555" stroke-width="0.800"/>
<path d="M25.6 442.0L28.5 439.8L36 440.8V448.3L33 450.7L25.6 449.3Z" fill="#4d9dc9" stroke="#0f3a57" stroke-width="1.100" stroke-linejoin="round"/><path d="M25.6 442.0L33 443.2L36 440.8M33 443.2V450.7" fill="none" stroke="#174e73" stroke-width="0.800"/><path d="M25.6 442.0L28.5 439.8L36 440.8L33 443.2Z" fill="#7dc2e4"/><path d="M27.5 461.5L30.5 459.0L42 458.3V471.0L39 473.8L27.5 474.5Z" fill="#f6f6f6" stroke="#555" stroke-width="0.900" stroke-linejoin="round"/><path d="M27.5 461.5L39 460.8L42 458.3M39 460.8V473.8" fill="none" stroke="#7d7d7d" stroke-width="0.800"/>
<path d="M30.8 464.3L36.8 463.8V470.3L30.8 470.8Z" fill="#e8f2f8" stroke="#2a6f92" stroke-width="1"/><path d="M34 464.1V468.0H30.8" fill="none" stroke="#2a6f92" stroke-width="1"/><path d="M34 464.1L36.8 463.8V470.3L34 468.0Z" fill="#4d9dc9"/><path d="M32.5 482.0L36 480.2L42.5 482.8V494.0L39 496.0L32.5 493.5Z" fill="#f8f8f8" stroke="#333" stroke-width="1" stroke-linejoin="round"/><path d="M32.5 482.0L39 484.5L42.5 482.8M39 484.5V496.0" fill="none" stroke="#555" stroke-width="0.800"/>
<path d="M25.6 486.0L28.5 483.8L36 484.8V492.3L33 494.7L25.6 493.3Z" fill="#4d9dc9" stroke="#0f3a57" stroke-width="1.100" stroke-linejoin="round"/><path d="M25.6 486.0L33 487.2L36 484.8M33 487.2V494.7" fill="none" stroke="#174e73" stroke-width="0.800"/><path d="M25.6 486.0L28.5 483.8L36 484.8L33 487.2Z" fill="#7dc2e4"/><path d="M39.300 501.700H26.500V512.500Q26.500 518.300 32.500 518.300H43" fill="none" stroke="#2f6d8f" stroke-width="2"/><path d="M30 505V516M33.500 505V516M37 505V516M30 508H40M30 511.500H40M30 515H40" stroke="#cfe2f0" stroke-width="0.500"/></svg>
<svg style="left:0;top:990px;font-family:'Liberation Sans',sans-serif" width="970" height="31" viewBox="0 990 970 31"><defs><linearGradient id="gbf" x1="0" y1="0" x2="1" y2="1"><stop offset="0" stop-color="#8fcbe6"/><stop offset="1" stop-color="#3587b4"/></linearGradient></defs><path d="M20.8 999.8H32.8V1001.3L28.48 1005.3199999999999V1011.3H25.12V1005.3199999999999L20.8 1001.3Z" fill="#e2e2e2" stroke="#cdcdcd" stroke-width="0.9" stroke-linejoin="round"/><path d="M45.5 997.5H54.5V999.0L51.26 1001.82V1006.5H48.74V1001.82L45.5 999.0Z" fill="#f0f0f0" stroke="#d2d2d2" stroke-width="0.9" stroke-linejoin="round"/><path d="M49 1000.5H58V1002.0L54.76 1004.82V1009.5H52.24V1004.82L49 1002.0Z" fill="#f0f0f0" stroke="#d2d2d2" stroke-width="0.9" stroke-linejoin="round"/><path d="M53 1003.5H62.5V1005.0L59.08 1008.54V1014.0H56.42V1008.54L53 1005.0Z" fill="#f0f0f0" stroke="#d2d2d2" stroke-width="0.9" stroke-linejoin="round"/><path d="M72.6 997.8H83.1V999.3L79.32 1001.64V1005.8H76.38V1001.64L72.6 999.3Z" fill="#ecb4f6" stroke="#4a0a5c" stroke-width="1.2" stroke-linejoin="round"/><path d="M75.8 1000.8H86.3V1002.3L82.52 1005.12V1009.8H79.58V1005.12L75.8 1002.3Z" fill="#e6a0f2" stroke="#4a0a5c" stroke-width="1.2" stroke-linejoin="round"/><path d="M79 1003.8H89.8V1005.3L85.912 1008.8399999999999V1014.3H82.888V1008.8399999999999L79 1005.3Z" fill="#d88ae8" stroke="#4a0a5c" stroke-width="1.2" stroke-linejoin="round"/><path d="M102.300 997.200V1011.800L105.700 1008.700L108.200 1014.300L110.400 1013.300L108 1007.800H112.600Z" fill="#fff" stroke="#222" stroke-width="1" stroke-linejoin="round"/><path d="M146.500 997.500L158.500 1008.500H153.500L156.500 1014.300L153.800 1015.300L151 1009.800L147.500 1012.800Z" fill="#1d1d1d"/><path d="M141.300 997.200V1011.800L144.700 1008.700L147.200 1014.300L149.400 1013.300L147 1007.800H151.600Z" fill="#fff" stroke="#222" stroke-width="1" stroke-linejoin="round"/><circle cx="182" cy="1003.200" r="2.400" fill="#5fb0d8" stroke="#1c5f8c" stroke-width="1"/><path d="M187.6 1008H193.79999999999998L191.6 1010.9V1014.7H189.79999999999998V1010.9Z" fill="#ad52c2" stroke="#8a329f" stroke-width="0.500"/><path d="M208.700 997.300V1014.600" stroke="#2a6f92" stroke-width="1.900"/><path d="M214.60999999999999 1008H220.80999999999997L218.60999999999999 1010.9V1014.7H216.80999999999997V1010.9Z" fill="#ad52c2" stroke="#8a329f" stroke-width="0.500"/><rect x="230.800" y="997.800" width="12.600" height="12.600" fill="url(#gbf)" stroke="#0f3a55" stroke-width="1.300"/><path d="M241.62 1008H247.82L245.62 1010.9V1014.7H243.82V1010.9Z" fill="#ad52c2" stroke="#8a329f" stroke-width="0.500"/><path d="M257 1005.500Q258.500 1001.500 262.500 1001.500Q266 1001.500 268 997.500Q273.500 999 275 1003.500Q274.500 1006.500 271 1007Q267 1007.500 264.500 1014.500Q259 1010.500 257 1005.500Z" fill="url(#gbf)" stroke="#0f3a55" stroke-width="1.200" stroke-linejoin="round"/><path d="M262.500 1001.500Q263 1006 264.500 1014.500" fill="none" stroke="#bfe4f4" stroke-width="0.800" stroke-opacity="0.700"/><path d="M268.63 1008H274.83000000000004L272.63 1010.9V1014.7H270.83000000000004V1010.9Z" fill="#ad52c2" stroke="#8a329f" stroke-width="0.500"/><path d="M284.700 1001.500L291 997.500L300 999.700V1010L294 1014.800L284.700 1012Z" fill="url(#gbf)" stroke="#0f3a55" stroke-width="1.200" stroke-linejoin="round"/><path d="M284.700 1001.500L294 1003.800L300 999.700M294 1003.800V1014.800" fill="none" stroke="#0f3a55" stroke-width="1"/><path d="M284.700 1001.500L291 997.500L300 999.700L294 1003.800Z" fill="#a8daee" fill-opacity="0.600"/><path d="M295.64 1008H301.84000000000003L299.64 1010.9V1014.7H297.84000000000003V1010.9Z" fill="#ad52c2" stroke="#8a329f" stroke-width="0.500"/><path d="M311.500 1013L326.700 997.500" stroke="#2a5d7a" stroke-width="1.900" stroke-dasharray="4 1.300 1.300 1.300"/><path d="M322.65 1008H328.85L326.65 1010.9V1014.7H324.85V1010.9Z" fill="#ad52c2" stroke="#8a329f" stroke-width="0.500"/><path d="M338.300 1001L349 997.800V1011L338.300 1014Z" fill="url(#gbf)" stroke="#1c5f8c" stroke-width="0.900"/><path d="M343.700 996.500V1015.500" stroke="#1a1a1a" stroke-width="0.900" stroke-dasharray="2.500 1.300"/><path d="M349.65999999999997 1008H355.86L353.65999999999997 1010.9V1014.7H351.86V1010.9Z" fill="#ad52c2" stroke="#8a329f" stroke-width="0.500"/><rect x="368.300" y="1000" width="5.400" height="5.400" fill="url(#gbf)" stroke="#1c5f8c" stroke-width="1"/><path d="M376.66999999999996 1008H382.87L380.66999999999996 1010.9V1014.7H378.87V1010.9Z" fill="#ad52c2" stroke="#8a329f" stroke-width="0.500"/><path d="M396 1002H410M396 1006.500H410M400 998.500V1013M405 998.500V1013" stroke="#dde4e8" stroke-width="0.800"/><path d="M405.500 998H393V1006.500Q393 1013.500 400 1013.500H404" fill="none" stroke="#2a6f92" stroke-width="1.600"/><path d="M403.67999999999995 1008H409.88L407.67999999999995 1010.9V1014.7H405.88V1010.9Z" fill="#ad52c2" stroke="#8a329f" stroke-width="0.500"/><path d="M421.200 999.300V1013" stroke="#1a1a1a" stroke-width="1.500"/><path d="M421.200 999.300H435" stroke="#2a6f92" stroke-width="1.500"/><rect x="419.5" y="997.5999999999999" width="3.400" height="3.400" fill="#fff" stroke="#1a1a1a" stroke-width="1"/><rect x="419.5" y="1011.3" width="3.400" height="3.400" fill="#fff" stroke="#1a1a1a" stroke-width="1"/><rect x="433.3" y="997.5999999999999" width="3.400" height="3.400" fill="#fff" stroke="#1a1a1a" stroke-width="1"/><path d="M430.68999999999994 1008H436.89L434.68999999999994 1010.9V1014.7H432.89V1010.9Z" fill="#ad52c2" stroke="#8a329f" stroke-width="0.500"/><path d="M446.800 1012.500L461.500 998" stroke="#2a6f92" stroke-width="1.700"/><rect x="452.5" y="1003.5" width="3.400" height="3.400" fill="#fff" stroke="#1a1a1a" stroke-width="1"/><path d="M457.7 1008H463.90000000000003L461.7 1010.9V1014.7H459.90000000000003V1010.9Z" fill="#ad52c2" stroke="#8a329f" stroke-width="0.500"/><path d="M482 996.800V1014.600M473 1005.700H491" stroke="#2a6f92" stroke-width="1.500"/><circle cx="482" cy="1005.700" r="4.600" fill="#f5f5f5" stroke="#1a1a1a" stroke-width="1.500"/><circle cx="482" cy="1005.700" r="1.500" fill="#2a6f92"/><path d="M484.71 1008H490.91L488.71 1010.9V1014.7H486.91V1010.9Z" fill="#ad52c2" stroke="#8a329f" stroke-width="0.500"/><path d="M506.300 1000.400H517V1010.400H506.300" fill="#f8f8f8" stroke="#2a2a2a" stroke-width="1"/><rect x="501.300" y="997.800" width="5" height="15.500" fill="#e4e4e4" stroke="#2a2a2a" stroke-width="1"/><path d="M499.500 1005.500H518.500" stroke="#2a6f92" stroke-width="1" stroke-dasharray="2.500 1.300"/><path d="M511.7199999999999 1008H517.92L515.7199999999999 1010.9V1014.7H513.92V1010.9Z" fill="#ad52c2" stroke="#8a329f" stroke-width="0.500"/><g transform="rotate(-42 534.300 1004.300)"><rect x="529" y="1000.800" width="10.600" height="7" fill="#f8f8f8" stroke="#1a1a1a" stroke-width="1.400"/><path d="M529 1007.800H539.600" stroke="#2a6f92" stroke-width="1.900"/><path d="M532 998.800V1001.500M534.300 998.800V1001.500M536.600 998.800V1001.500" stroke="#1a1a1a" stroke-width="1"/></g><path d="M538.7299999999999 1008H544.93L542.7299999999999 1010.9V1014.7H540.93V1010.9Z" fill="#ad52c2" stroke="#8a329f" stroke-width="0.500"/><path d="M555 1006H562L558.500 1013.500L555 1006M558.500 1013.500L564.500 998.300H572" fill="none" stroke="#1a1a1a" stroke-width="1.500"/><path d="M565.74 1008H571.94L569.74 1010.9V1014.7H567.94V1010.9Z" fill="#ad52c2" stroke="#8a329f" stroke-width="0.500"/><rect x="580.500" y="997.700" width="19.500" height="8.800" fill="#f8f8f8" stroke="#1a1a1a" stroke-width="1.100"/><path d="M589.800 997.700V1006.500" stroke="#1a1a1a" stroke-width="0.900"/><path d="M582.800 1004Q582.800 1000.500 585.300 1000.500Q587.800 1000.500 587.800 1004Z" fill="none" stroke="#1a1a1a" stroke-width="0.900"/><text x="591" y="1005" font-size="7" font-weight="700" fill="#1a1a1a" textLength="8" lengthAdjust="spacingAndGlyphs">0.3</text><path d="M592.75 1008H598.95L596.75 1010.9V1014.7H594.95V1010.9Z" fill="#ad52c2" stroke="#8a329f" stroke-width="0.500"/><path d="M615 1008L609.300 1013.500" stroke="#1a1a1a" stroke-width="1.900"/><circle cx="618.600" cy="1003.300" r="5.900" fill="#fafafa" stroke="#444" stroke-width="1.100"/><text x="618.600" y="1006.500" font-size="8.800" text-anchor="middle" fill="#1a1a1a">N</text><path d="M619.76 1008H625.96L623.76 1010.9V1014.7H621.96V1010.9Z" fill="#ad52c2" stroke="#8a329f" stroke-width="0.500"/><rect x="635.500" y="997.800" width="12" height="11.500" fill="#fafafa" stroke="#1a1a1a" stroke-width="1"/><text x="641.500" y="1007.800" font-size="11" font-weight="700" text-anchor="middle" fill="#1a1a1a">A</text><path d="M641.500 1009.500L645 1013.500H638Z" fill="#1a1a1a"/><path d="M636 1014H647" stroke="#1a1a1a" stroke-width="1.200"/><path d="M646.77 1008H652.97L650.77 1010.9V1014.7H648.97V1010.9Z" fill="#ad52c2" stroke="#8a329f" stroke-width="0.500"/><path d="M662.500 1009L666 1002.500H672L670 1009L680 1000" fill="none" stroke="#1a1a1a" stroke-width="1.600" stroke-linejoin="round"/><path d="M674 999L680.500 1003" stroke="#1a1a1a" stroke-width="1.100"/><path d="M673.78 1008H679.98L677.78 1010.9V1014.7H675.98V1010.9Z" fill="#ad52c2" stroke="#8a329f" stroke-width="0.500"/><path d="M690 997.800V1004.500H697Z" fill="#dff0f8" stroke="#2a6f92" stroke-width="1.100"/><path d="M689.500 1007.500Q691.500 1011 689.500 1014.500M692.500 1007.500Q694.500 1011 692.500 1014.500M695.500 1007.500Q697.500 1011 695.500 1014.500M698.500 1007.500Q700.500 1011 698.500 1014.500" fill="none" stroke="#1a1a1a" stroke-width="0.900"/><path d="M700.7900000000001 1008H706.9900000000001L704.7900000000001 1010.9V1014.7H702.9900000000001V1010.9Z" fill="#ad52c2" stroke="#8a329f" stroke-width="0.500"/><path d="M720.500 1008L716.300 1012.800" stroke="#1a1a1a" stroke-width="1.900"/><circle cx="724.400" cy="1003.600" r="5.800" fill="#fafafa" stroke="#555" stroke-width="1.100"/><path d="M719 1002.500H730" stroke="#555" stroke-width="0.700"/><text x="724.500" y="1008" font-size="6" font-weight="700" text-anchor="middle" fill="#1a1a1a">A1</text><path d="M727.8000000000001 1008H734.0000000000001L731.8000000000001 1010.9V1014.7H730.0000000000001V1010.9Z" fill="#ad52c2" stroke="#8a329f" stroke-width="0.500"/><path d="M746 998.500H754.500V1008L750.300 1013.500L746 1008Z" fill="#d9d9d9" stroke="#666" stroke-width="0.900"/><path d="M743.800 997.300H756.800V1007M743.800 997.300V1007" fill="none" stroke="#1a1a1a" stroke-width="0.900" stroke-dasharray="1.500 1.200"/><path d="M754.8100000000001 1008H761.0100000000001L758.8100000000001 1010.9V1014.7H757.0100000000001V1010.9Z" fill="#ad52c2" stroke="#8a329f" stroke-width="0.500"/><rect x="770.300" y="997.800" width="14" height="13.500" fill="#fafafa" stroke="#1a1a1a" stroke-width="1"/><text x="776" y="1009.300" font-family="'Liberation Serif',serif" font-size="12" font-weight="700" text-anchor="middle" fill="#1a1a1a">A</text><circle cx="781.300" cy="1000.800" r="1.300" fill="none" stroke="#1a1a1a" stroke-width="0.800"/><path d="M781.82 1008H788.0200000000001L785.82 1010.9V1014.7H784.0200000000001V1010.9Z" fill="#ad52c2" stroke="#8a329f" stroke-width="0.500"/><circle cx="805" cy="1004.600" r="7.300" fill="#f2f2f2" stroke="#555" stroke-width="1"/><path d="M805 1004.600V997.300A7.300 7.300 0 0 1 812.300 1004.600ZM805 1004.600V1011.900A7.300 7.300 0 0 1 797.700 1004.600Z" fill="#1a1a1a"/><path d="M808.83 1008H815.0300000000001L812.83 1010.9V1014.7H811.0300000000001V1010.9Z" fill="#ad52c2" stroke="#8a329f" stroke-width="0.500"/><path d="M824 1001.600H835" stroke="#1a1a1a" stroke-width="1.400"/><rect x="834.700" y="997.800" width="7.300" height="7.300" fill="url(#gbf)" stroke="#1c5f8c" stroke-width="1"/><path d="M835.84 1008H842.0400000000001L839.84 1010.9V1014.7H838.0400000000001V1010.9Z" fill="#ad52c2" stroke="#8a329f" stroke-width="0.500"/><path d="M851 1001.600H869" stroke="#1a1a1a" stroke-width="1.400"/><rect x="856.800" y="997.800" width="7.300" height="7.300" fill="url(#gbf)" stroke="#1c5f8c" stroke-width="1"/><path d="M862.85 1008H869.0500000000001L866.85 1010.9V1014.7H865.0500000000001V1010.9Z" fill="#ad52c2" stroke="#8a329f" stroke-width="0.500"/><rect x="878" y="997.500" width="13" height="13" fill="url(#gbf)" stroke="#1c5f8c" stroke-width="0.900"/><path d="M886 1004.0L891.5 998.5L895.5 1001.5L895 1006.5L889.5 1007.5Z" fill="#f2f2f2" stroke="#333" stroke-width="0.800" stroke-linejoin="round"/><path d="M886 1004.0L895.5 1001.5M891.5 998.5L889.5 1007.5M891.5 998.5L895 1006.5M888.8 1001.3L892.5 1007.0" stroke="#333" stroke-width="0.600" fill="none"/><path d="M889.86 1008H896.0600000000001L893.86 1010.9V1014.7H892.0600000000001V1010.9Z" fill="#ad52c2" stroke="#8a329f" stroke-width="0.500"/><path d="M908.700 997V1014.600" stroke="#2a6f92" stroke-width="1.800"/><path d="M913 1004.0L918.5 998.5L922.5 1001.5L922 1006.5L916.5 1007.5Z" fill="#f2f2f2" stroke="#333" stroke-width="0.800" stroke-linejoin="round"/><path d="M913 1004.0L922.5 1001.5M918.5 998.5L916.5 1007.5M918.5 998.5L922 1006.5M915.8 1001.3L919.5 1007.0" stroke="#333" stroke-width="0.600" fill="none"/><path d="M916.87 1008H923.07L920.87 1010.9V1014.7H919.07V1010.9Z" fill="#ad52c2" stroke="#8a329f" stroke-width="0.500"/><circle cx="935" cy="1001.600" r="2.300" fill="#5fb0d8" stroke="#1c5f8c" stroke-width="0.900"/><path d="M940 1004.0L945.5 998.5L949.5 1001.5L949 1006.5L943.5 1007.5Z" fill="#f2f2f2" stroke="#333" stroke-width="0.800" stroke-linejoin="round"/><path d="M940 1004.0L949.5 1001.5M945.5 998.5L943.5 1007.5M945.5 998.5L949 1006.5M942.8 1001.3L946.5 1007.0" stroke="#333" stroke-width="0.600" fill="none"/><path d="M943.88 1008H950.08L947.88 1010.9V1014.7H946.08V1010.9Z" fill="#ad52c2" stroke="#8a329f" stroke-width="0.500"/></svg>
<svg style="left:1897px;top:1023px;" width="19" height="17" viewBox="0 0 19 17"><path d="M2 7L10 1.500L19 5V9L11 15.500L2 11Z" fill="#eee" stroke="#333" stroke-width="1" stroke-linejoin="round"/><path d="M2 7L11 10.500L19 5M11 10.500V15.500" fill="none" stroke="#333" stroke-width="0.900"/><ellipse cx="10.500" cy="6" rx="3.300" ry="1.800" fill="none" stroke="#333" stroke-width="0.900"/></svg>
</body></html>
